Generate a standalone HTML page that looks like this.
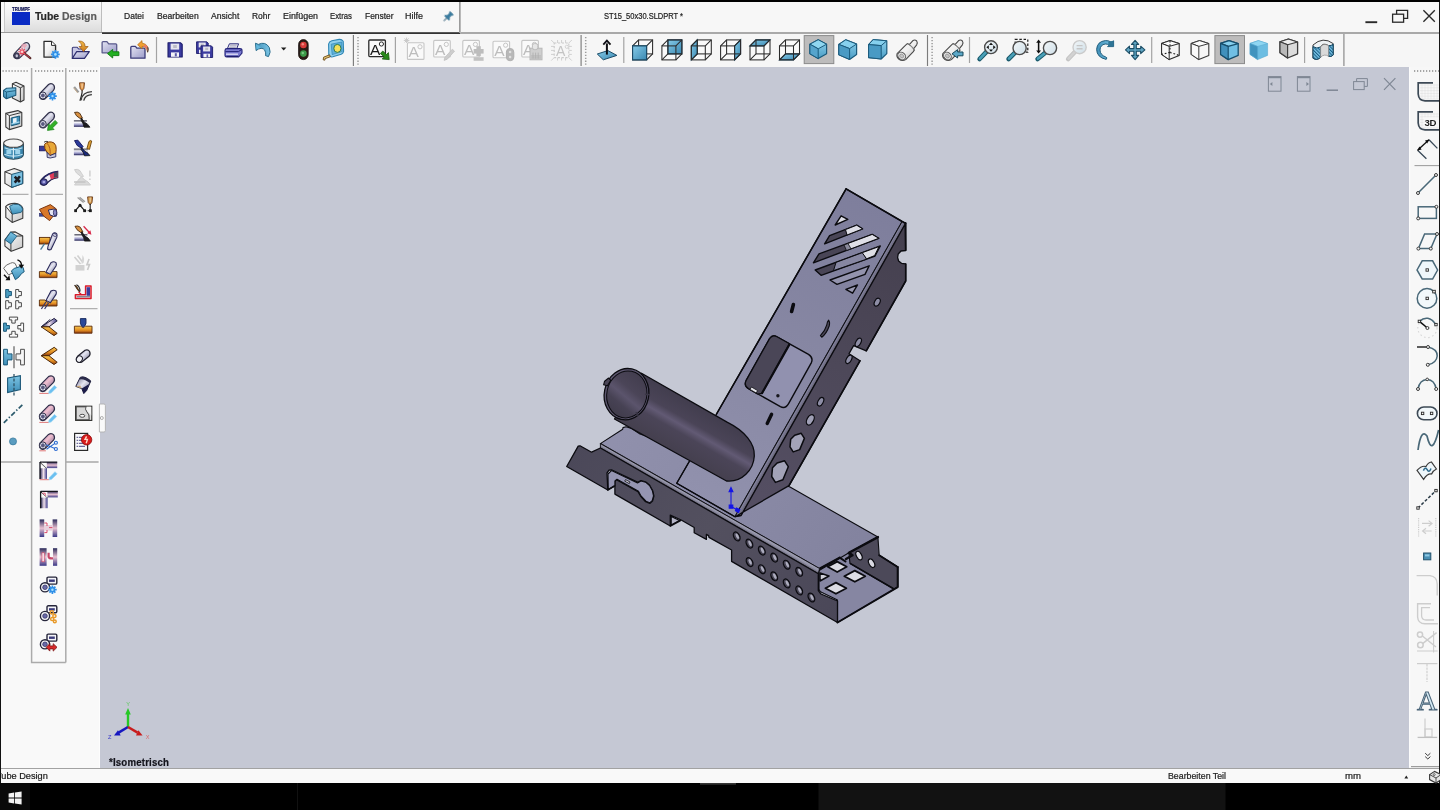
<!DOCTYPE html>
<html lang="de">
<head>
<meta charset="utf-8">
<title>Tube Design - ST15_50x30.SLDPRT *</title>
<style>
*{box-sizing:border-box;margin:0;padding:0}
html,body{width:1440px;height:810px;overflow:hidden;background:#f6f6f6;font-family:"Liberation Sans","DejaVu Sans",sans-serif;}
#app{position:absolute;left:0;top:0;width:1440px;height:810px;overflow:hidden;background:#f6f6f6}
.abs{position:absolute}
#topblack{left:0;top:0;width:1440px;height:2px;background:#000}
#leftblack{left:0;top:2px;width:1px;height:782px;background:#111}
#titlebar{left:1px;top:2px;width:1439px;height:31px;background:#f7f7f7}
#logopanel{left:4px;top:2px;width:98px;height:30px;background:linear-gradient(#fbfbfb,#f1f1f1 45%,#dcdcdc);border-left:1px solid #c9c9c9;border-right:1px solid #bdbdbd}
#logosq{left:12px;top:12px;width:18px;height:13px;background:#0a2bc4}
#logotxt{left:12px;top:6px;font-size:5px;font-weight:bold;color:#0a1a7a;letter-spacing:0;line-height:5px;transform:scaleX(.92);transform-origin:0 0}
#apptitle{left:35px;top:9px;font-size:11.5px;font-weight:bold;color:#2a2a2a;line-height:14px;white-space:nowrap}
#apptitle span{color:#5c5c5c}
#menuline{left:102px;top:32px;width:358px;height:2px;background:linear-gradient(#6a6a6a,#222)}
#menuline2{left:460px;top:32.4px;width:980px;height:1.2px;background:#a9a9a9}
#menuline0{left:1px;top:32px;width:101px;height:1px;background:#9a9a9a}
#menuright{left:459px;top:2px;width:2px;height:31px;background:linear-gradient(90deg,#8c8c8c,#c8c8c8)}
.menu{top:11px;font-size:9.3px;color:#1e1e1e;line-height:12px;white-space:nowrap}
#doctitle{left:604px;top:11px;font-size:9px;color:#222;line-height:12px;white-space:nowrap}
#toolbar{left:1px;top:34px;width:1439px;height:33px;background:#f6f6f6}
#viewport{left:100px;top:67px;width:1309px;height:701px;background:#c5c8d4}
#leftbar{left:1px;top:67px;width:99px;height:702px;background:#f9f9f9;border-right:1px solid #fdfdfd}
#rightbar{left:1409px;top:67px;width:31px;height:702px;background:#f6f6f6}
#statusbar{left:0;top:768px;width:1440px;height:15px;background:#f9f9f9;border-top:1.4px solid #a2a2a2}
#taskbar{left:0;top:783px;width:1440px;height:27px;background:#000}
.st{top:771px;font-size:9.3px;color:#1a1a1a;line-height:12px;white-space:nowrap}
#isotxt{left:109px;top:756px;font-size:10px;font-weight:bold;color:#15151c;line-height:12px;letter-spacing:.3px;white-space:nowrap}
svg{position:absolute;left:0;top:0;overflow:visible}
.tx{position:absolute;white-space:nowrap;line-height:1.2;transform-origin:0 50%;filter:blur(.3px);-webkit-text-stroke:.22px currentColor}
</style>
</head>
<body>
<div id="app">
<div class="abs" id="titlebar"></div>
<div class="abs" id="toolbar"></div>
<div class="abs" id="leftbar"></div>
<div class="abs" id="rightbar"></div>
<div class="abs" id="viewport"></div>
<div class="abs" id="logopanel"></div>
<div class="abs" id="logosq"></div>
<div class="abs" id="menuline0"></div>
<div class="abs" id="menuline"></div>
<div class="abs" id="menuline2"></div>
<div class="abs" id="menuright"></div>
<div class="abs" id="statusbar"></div>
<div class="abs" id="taskbar"></div>
<div class="abs" id="topblack"></div>
<div class="abs" id="leftblack"></div>
<svg id="model" style="filter:blur(.35px)" width="1440" height="810" viewBox="0 0 1440 810">
<defs>
<linearGradient id="gTop" gradientUnits="userSpaceOnUse" x1="620" y1="430" x2="880" y2="580"><stop offset="0" stop-color="#9090ac"/><stop offset=".5" stop-color="#8989a5"/><stop offset="1" stop-color="#81819d"/></linearGradient>
<linearGradient id="gFront" gradientUnits="userSpaceOnUse" x1="880" y1="200" x2="700" y2="500"><stop offset="0" stop-color="#7e7e9c"/><stop offset=".5" stop-color="#8787a3"/><stop offset="1" stop-color="#9191ad"/></linearGradient>
<linearGradient id="gSide" gradientUnits="userSpaceOnUse" x1="570" y1="450" x2="840" y2="620"><stop offset="0" stop-color="#4b4859"/><stop offset=".5" stop-color="#53505f"/><stop offset="1" stop-color="#4a4758"/></linearGradient>
<linearGradient id="gUSide" gradientUnits="userSpaceOnUse" x1="900" y1="230" x2="770" y2="500"><stop offset="0" stop-color="#45404f"/><stop offset=".5" stop-color="#4d4859"/><stop offset="1" stop-color="#544e62"/></linearGradient>
<linearGradient id="gTube" gradientUnits="userSpaceOnUse" x1="700" y1="400" x2="672" y2="449"><stop offset="0" stop-color="#3f3b4b"/><stop offset=".42" stop-color="#4a4457"/><stop offset=".55" stop-color="#625a74"/><stop offset=".68" stop-color="#4b4558"/><stop offset="1" stop-color="#45404f"/></linearGradient>
<linearGradient id="gTubeIn" gradientUnits="userSpaceOnUse" x1="638" y1="371" x2="614" y2="417"><stop offset="0" stop-color="#413c4d"/><stop offset=".38" stop-color="#4b4558"/><stop offset=".55" stop-color="#5b546c"/><stop offset=".72" stop-color="#474254"/><stop offset="1" stop-color="#3e3a49"/></linearGradient>
<linearGradient id="gBev" gradientUnits="userSpaceOnUse" x1="0" y1="0" x2="3" y2="-5.2" spreadMethod="reflect"><stop offset="0" stop-color="#5a5768"/><stop offset="1" stop-color="#a9a9bd"/></linearGradient>
<linearGradient id="gBevB" gradientUnits="userSpaceOnUse" x1="700" y1="505.4" x2="703.4" y2="499.5"><stop offset="0" stop-color="#5f5c6d"/><stop offset=".35" stop-color="#9292a6"/><stop offset="1" stop-color="#adadc0"/></linearGradient>
<linearGradient id="gBevU" gradientUnits="userSpaceOnUse" x1="820" y1="367" x2="824.6" y2="369.6"><stop offset="0" stop-color="#8686a3"/><stop offset=".5" stop-color="#6f6d82"/><stop offset="1" stop-color="#4b4757"/></linearGradient>
</defs>
<polygon points="600.4,443.6 622.7,429.2 623.0,427.6 626.0,426.8 631.6,428.6 640.0,434.0 790.0,487.0 877.9,537.1 848.9,552.7 852.0,555.5 845.0,559.5 839.7,557.7 819.5,568.7" fill="url(#gTop)" stroke="#0b0b10" stroke-width="1.1" stroke-linejoin="round" />
<polygon points="818.3,571.0 848.9,552.7 879.2,555.5 897.7,567.0 897.7,587.1 837.5,622.5 837.5,600.0 821.0,592.0 818.3,589.0" fill="#8686a2" stroke="#0b0b10" stroke-width="1.1" stroke-linejoin="round" />
<polygon points="877.9,537.1 879.2,555.2 897.7,567.0 897.7,587.1 894.0,589.0 850.0,563.5 848.9,552.7" fill="#4c4959" stroke="#0b0b10" stroke-width="1.1" stroke-linejoin="round" />
<polyline points="894.0,589.0 850.6,563.6" fill="none" stroke="#0b0b10" stroke-width="1.6" stroke-linecap="round" stroke-linejoin="round" />
<polyline points="877.9,537.1 848.9,552.7 852.5,555.2 846.0,559.0" fill="none" stroke="#0b0b10" stroke-width="2.4" stroke-linecap="round" stroke-linejoin="round" />
<polyline points="839.7,557.7 845.5,561.5" fill="none" stroke="#0b0b10" stroke-width="2" stroke-linecap="round" stroke-linejoin="round" />
<polyline points="839.7,557.7 819.5,568.7" fill="none" stroke="#0b0b10" stroke-width="2.4" stroke-linecap="round" stroke-linejoin="round" />
<polyline points="818.5,570.0 818.5,590.0" fill="none" stroke="#0b0b10" stroke-width="2.2" stroke-linecap="round" stroke-linejoin="round" />
<ellipse cx="859.0" cy="555.6" rx="2.6" ry="4.6" transform="rotate(-28 859.0 555.6)" fill="#d9d9e2" stroke="#0b0b10" stroke-width="1.2" />
<ellipse cx="871.6" cy="563.2" rx="2.6" ry="4.6" transform="rotate(-28 871.6 563.2)" fill="#d9d9e2" stroke="#0b0b10" stroke-width="1.2" />
<polygon points="827.7,566.8 837.2,561.6 846.7,566.8 837.2,572.0" fill="#dcdce4" stroke="#0b0b10" stroke-width="1.8" stroke-linejoin="round" />
<polygon points="844.3,576.2 854.8,570.6 865.3,576.2 854.8,581.8" fill="#dcdce4" stroke="#0b0b10" stroke-width="1.8" stroke-linejoin="round" />
<polygon points="825.4,588.2 835.9,582.6 846.4,588.2 835.9,593.8" fill="#dcdce4" stroke="#0b0b10" stroke-width="1.8" stroke-linejoin="round" />
<polygon points="820.0,573.0 829.0,576.0 820.0,581.0" fill="#d0d0da" stroke="#0b0b10" stroke-width="1.5" stroke-linejoin="round" />
<polyline points="897.7,567.0 897.7,587.1 837.5,622.5" fill="none" stroke="#0b0b10" stroke-width="2" stroke-linecap="round" stroke-linejoin="round" />
<polyline points="879.2,555.2 897.7,567.0" fill="none" stroke="#0b0b10" stroke-width="1.8" stroke-linecap="round" stroke-linejoin="round" />
<polygon points="600.4,443.6 819.5,568.5 818.3,573.7 600.4,448.0" fill="url(#gBevB)" stroke="#0b0b10" stroke-width="0.9" stroke-linejoin="round" />
<polygon points="566.7,466.5 578.2,446.1 580.0,445.8 591.6,452.2 600.4,448.0 818.3,573.7 818.3,590.5 821.0,594.0 837.5,601.0 837.5,622.5 731.6,561.4 731.6,550.0 709.0,537.4 708.6,535.6 706.4,534.4 706.4,539.4 694.2,532.8 694.2,527.5 681.2,520.0 670.3,515.1 670.3,526.0 614.9,494.1 614.9,481.5 616.5,479.6 638.0,491.6 640.5,496.0 645.6,501.7 649.8,503.4 652.5,501.0 653.9,496.0 652.6,490.5 649.5,485.0 645.5,481.8 641.0,480.6 638.0,482.4 612.0,470.0 609.0,470.2 607.0,473.0 607.8,490.0" fill="url(#gSide)" stroke="#0b0b10" stroke-width="1.3" stroke-linejoin="round" />
<polygon points="608.0,474.0 611.5,470.6 637.5,483.0 641.0,481.0 645.5,482.2 649.5,485.5 652.4,490.8 653.5,496.0 652.2,500.6 649.6,502.8 646.0,501.2 641.0,496.0 638.5,491.3 617.0,479.3 614.9,481.0 614.9,486.0 608.3,489.5" fill="#9595b2" stroke="#0b0b10" stroke-width="1.1" stroke-linejoin="round" />
<polygon points="625.5,479.6 630.0,482.0 629.3,483.6 624.8,481.2" fill="#dcdce6" stroke="#0b0b10" stroke-width="0.8" stroke-linejoin="round" />
<polygon points="671.2,516.5 679.5,520.5 671.2,525.0" fill="#b4b4c6" stroke="#0b0b10" stroke-width="1.2" stroke-linejoin="round" />
<polyline points="607.8,490.0 614.3,486.0" fill="none" stroke="#0b0b10" stroke-width="1.5" stroke-linecap="round" stroke-linejoin="round" />
<polyline points="670.3,526.0 680.5,520.5" fill="none" stroke="#0b0b10" stroke-width="1.5" stroke-linecap="round" stroke-linejoin="round" />
<ellipse cx="736.7" cy="536.4" rx="2.9" ry="4.7" transform="rotate(-27 736.7 536.4)" fill="#4a4757" stroke="#0b0b10" stroke-width="1.3" />
<ellipse cx="737.3" cy="536.2" rx="1.3" ry="3.0" transform="rotate(-27 737.3 536.2)" fill="#adadbe"/>
<ellipse cx="749.4" cy="543.6" rx="2.9" ry="4.7" transform="rotate(-27 749.4 543.6)" fill="#4a4757" stroke="#0b0b10" stroke-width="1.3" />
<ellipse cx="750.0" cy="543.4" rx="1.3" ry="3.0" transform="rotate(-27 750.0 543.4)" fill="#adadbe"/>
<ellipse cx="761.8" cy="550.6" rx="2.9" ry="4.7" transform="rotate(-27 761.8 550.6)" fill="#4a4757" stroke="#0b0b10" stroke-width="1.3" />
<ellipse cx="762.4" cy="550.4" rx="1.3" ry="3.0" transform="rotate(-27 762.4 550.4)" fill="#adadbe"/>
<ellipse cx="774.2" cy="557.6" rx="2.9" ry="4.7" transform="rotate(-27 774.2 557.6)" fill="#4a4757" stroke="#0b0b10" stroke-width="1.3" />
<ellipse cx="774.8" cy="557.4" rx="1.3" ry="3.0" transform="rotate(-27 774.8 557.4)" fill="#adadbe"/>
<ellipse cx="786.7" cy="564.7" rx="2.9" ry="4.7" transform="rotate(-27 786.7 564.7)" fill="#4a4757" stroke="#0b0b10" stroke-width="1.3" />
<ellipse cx="787.3" cy="564.5" rx="1.3" ry="3.0" transform="rotate(-27 787.3 564.5)" fill="#adadbe"/>
<ellipse cx="799.2" cy="571.8" rx="2.9" ry="4.7" transform="rotate(-27 799.2 571.8)" fill="#4a4757" stroke="#0b0b10" stroke-width="1.3" />
<ellipse cx="799.8" cy="571.6" rx="1.3" ry="3.0" transform="rotate(-27 799.8 571.6)" fill="#adadbe"/>
<ellipse cx="749.6" cy="562.1" rx="2.9" ry="4.7" transform="rotate(-27 749.6 562.1)" fill="#4a4757" stroke="#0b0b10" stroke-width="1.3" />
<ellipse cx="750.2" cy="561.9" rx="1.3" ry="3.0" transform="rotate(-27 750.2 561.9)" fill="#adadbe"/>
<ellipse cx="761.9" cy="569.2" rx="2.9" ry="4.7" transform="rotate(-27 761.9 569.2)" fill="#4a4757" stroke="#0b0b10" stroke-width="1.3" />
<ellipse cx="762.5" cy="569.0" rx="1.3" ry="3.0" transform="rotate(-27 762.5 569.0)" fill="#adadbe"/>
<ellipse cx="774.2" cy="576.3" rx="2.9" ry="4.7" transform="rotate(-27 774.2 576.3)" fill="#4a4757" stroke="#0b0b10" stroke-width="1.3" />
<ellipse cx="774.8" cy="576.1" rx="1.3" ry="3.0" transform="rotate(-27 774.8 576.1)" fill="#adadbe"/>
<ellipse cx="786.7" cy="583.4" rx="2.9" ry="4.7" transform="rotate(-27 786.7 583.4)" fill="#4a4757" stroke="#0b0b10" stroke-width="1.3" />
<ellipse cx="787.3" cy="583.2" rx="1.3" ry="3.0" transform="rotate(-27 787.3 583.2)" fill="#adadbe"/>
<ellipse cx="799.2" cy="590.4" rx="2.9" ry="4.7" transform="rotate(-27 799.2 590.4)" fill="#4a4757" stroke="#0b0b10" stroke-width="1.3" />
<ellipse cx="799.8" cy="590.2" rx="1.3" ry="3.0" transform="rotate(-27 799.8 590.2)" fill="#adadbe"/>
<ellipse cx="811.4" cy="597.5" rx="2.9" ry="4.7" transform="rotate(-27 811.4 597.5)" fill="#4a4757" stroke="#0b0b10" stroke-width="1.3" />
<ellipse cx="812.0" cy="597.3" rx="1.3" ry="3.0" transform="rotate(-27 812.0 597.3)" fill="#adadbe"/>
<polygon points="846.1,188.9 902.2,221.5 735.0,516.7 676.7,483.3" fill="url(#gFront)" stroke="#0b0b10" stroke-width="1.3" stroke-linejoin="round" />
<polygon points="902.2,221.5 905.8,223.0 741.1,515.5 735.0,516.7" fill="url(#gBevU)" stroke="#0b0b10" stroke-width="0.9" stroke-linejoin="round" />
<polygon points="905.8,223.0 905.2,223.0 905.7,250.5 901.0,251.0 898.2,254.0 897.6,257.5 898.6,261.0 901.5,263.3 905.7,263.8 905.7,281.0 866.3,350.8 853.6,345.6 849.0,353.8 860.0,360.8 789.0,485.6 735.5,516.5 741.1,515.5" fill="url(#gUSide)" stroke="#0b0b10" stroke-width="1.3" stroke-linejoin="round" />
<polyline points="905.7,223.5 905.7,250.0" fill="none" stroke="#0b0b10" stroke-width="1.8" stroke-linecap="round" stroke-linejoin="round" />
<polyline points="905.7,264.0 905.7,281.0 866.3,350.8" fill="none" stroke="#0b0b10" stroke-width="1.6" stroke-linecap="round" stroke-linejoin="round" />
<polyline points="860.0,360.8 789.0,485.6" fill="none" stroke="#0b0b10" stroke-width="1.6" stroke-linecap="round" stroke-linejoin="round" />
<polyline points="846.1,188.9 902.2,221.5 905.4,223.2" fill="none" stroke="#0b0b10" stroke-width="1.6" stroke-linecap="round" stroke-linejoin="round" />
<polyline points="846.1,188.9 716.5,414.0" fill="none" stroke="#0b0b10" stroke-width="1.5" stroke-linecap="round" stroke-linejoin="round" />
<polyline points="689.2,461.7 676.7,483.3 735.0,516.7" fill="none" stroke="#0b0b10" stroke-width="1.2" stroke-linecap="round" stroke-linejoin="round" />
<ellipse cx="877.2" cy="302.2" rx="2.6" ry="4.2" transform="rotate(28 877.2 302.2)" fill="#8e8ea6" stroke="#0b0b10" stroke-width="1.2" />
<ellipse cx="858.3" cy="342.4" rx="2.5" ry="4.6" transform="rotate(28 858.3 342.4)" fill="#8e8ea6" stroke="#0b0b10" stroke-width="1.2" />
<ellipse cx="848.9" cy="359.4" rx="2.5" ry="4.6" transform="rotate(28 848.9 359.4)" fill="#8e8ea6" stroke="#0b0b10" stroke-width="1.2" />
<ellipse cx="820.6" cy="401.7" rx="2.6" ry="4.6" transform="rotate(28 820.6 401.7)" fill="#8e8ea6" stroke="#0b0b10" stroke-width="1.2" />
<ellipse cx="810.3" cy="419.8" rx="3.3" ry="5.6" transform="rotate(28 810.3 419.8)" fill="#a0a0b6" stroke="#0b0b10" stroke-width="1.3" />
<polygon points="801.2,433.3 804.4,438.4 799.7,449.6 793.2,451.9 790.0,446.8 790.7,439.3 794.7,435.2" fill="#a3a3b8" stroke="#0b0b10" stroke-width="1.5" stroke-linejoin="round" />
<polygon points="784.6,460.8 788.3,466.7 782.9,479.7 775.4,482.4 771.7,476.5 772.5,467.8 777.1,463.0" fill="#a3a3b8" stroke="#0b0b10" stroke-width="1.5" stroke-linejoin="round" />
<polygon points="841.1,215.8 847.8,219.4 835.2,225.0" fill="#dedee6" stroke="#0b0b10" stroke-width="1.4" stroke-linejoin="round" />
<polygon points="829.6,235.6 856.7,225.2 862.6,228.9 824.6,243.9" fill="#494556" stroke="#0b0b10" stroke-width="1.4" stroke-linejoin="round" />
<polygon points="845.5,229.6 856.7,225.2 862.6,228.9 847.0,235.0" fill="#dedee6" stroke="#0b0b10" stroke-width="1" stroke-linejoin="round" />
<polygon points="819.0,253.9 872.2,234.4 878.8,238.3 813.4,262.8" fill="#494556" stroke="#0b0b10" stroke-width="1.4" stroke-linejoin="round" />
<polygon points="846.0,244.2 872.2,234.4 878.8,238.3 850.5,249.0" fill="#dedee6" stroke="#0b0b10" stroke-width="1" stroke-linejoin="round" />
<polygon points="844.0,245.0 848.0,243.5 851.0,248.8 846.5,250.5" fill="#8a8a9c" stroke="#0b0b10" stroke-width="0.8" stroke-linejoin="round" />
<polygon points="815.2,270.0 880.3,246.0 875.0,256.0 821.1,275.3" fill="#494556" stroke="#0b0b10" stroke-width="1.4" stroke-linejoin="round" />
<polygon points="836.0,262.4 863.0,252.4 866.5,259.2 833.5,270.6" fill="#8787a2" stroke="#0b0b10" stroke-width="1" stroke-linejoin="round" />
<polygon points="862.2,252.7 879.0,246.6 874.6,255.6 866.6,258.8" fill="#dedee6" stroke="#0b0b10" stroke-width="1" stroke-linejoin="round" />
<polygon points="830.0,280.0 869.2,265.8 865.0,274.4 837.0,284.4" fill="#9393ad" stroke="#0b0b10" stroke-width="1.4" stroke-linejoin="round" />
<polygon points="857.5,285.0 852.6,293.2 845.9,289.3" fill="#9a9ab2" stroke="#0b0b10" stroke-width="1.4" stroke-linejoin="round" />
<polyline points="793.4,304.5 791.6,311.5" fill="none" stroke="#0b0b10" stroke-width="3.6" stroke-linecap="round" stroke-linejoin="round" />
<path d="M828.6,320.2 Q830.2,322 829.2,326 Q826.6,333.5 821.8,337.2 L820.4,335.6 Q825,331 826.8,324.8 Q827.2,321.6 828.6,320.2Z" fill="#4a4656" stroke="#0b0b10" stroke-width="1.1" stroke-linejoin="round" />
<path d="M776.5,336.6 L808.5,354.4 Q813.5,357.6 811.4,362.6 L788.6,403.6 Q785.4,409.2 780.4,406.6 L748.4,388.6 Q743.6,385.6 746.2,380.4 L769.6,338.6 Q772.6,334.2 776.5,336.6Z" fill="#9191af" stroke="#0b0b10" stroke-width="1.4" stroke-linejoin="round" />
<path d="M776.5,336.6 L789.5,343.8 L762,393.4 L757.5,394 L748.4,388.6 Q743.6,385.6 746.2,380.4 L769.6,338.6 Q772.6,334.2 776.5,336.6Z" fill="#4a4657" stroke="#0b0b10" stroke-width="1.2" stroke-linejoin="round" />
<polyline points="789.3,344.6 762.0,393.2" fill="none" stroke="#0b0b10" stroke-width="2.2" stroke-linecap="round" stroke-linejoin="round" />
<polygon points="751.5,387.0 757.6,390.6 756.2,393.0 750.0,389.4" fill="#e4e4ea" stroke="#0b0b10" stroke-width="0.8" stroke-linejoin="round" />
<circle cx="777.9" cy="395.8" r="1.7" fill="#16161c"/>
<polyline points="771.6,414.2 767.2,423.4" fill="none" stroke="#0b0b10" stroke-width="3.4" stroke-linecap="round" stroke-linejoin="round" />
<path d="M641.5,373.2 L727.5,422.4 C745.0,431.0 755.0,444.0 754.3,456.0 C753.5,470.0 742.0,482.5 726.5,481.0 L614.5,419.0 Z" fill="url(#gTube)" stroke="#0b0b10" stroke-width="1.3" stroke-linejoin="round" />
<ellipse cx="626.5" cy="394.2" rx="22.2" ry="25.8" transform="rotate(12 626.5 394.2)" fill="#5d5770" stroke="#0b0b10" stroke-width="1.3" />
<ellipse cx="626.8" cy="394.4" rx="20.0" ry="23.6" transform="rotate(12 626.8 394.4)" fill="url(#gTubeIn)" stroke="#0b0b10" stroke-width="1.0" />
<polygon points="604.6,381.2 608.6,378.0 610.8,380.4 607.4,385.8 603.6,384.8" fill="#4a4557" stroke="#0b0b10" stroke-width="1.1" stroke-linejoin="round" />
<polyline points="645.6,394.2 649.4,394.8" fill="none" stroke="#3a3646" stroke-width="1.6" stroke-linecap="round" stroke-linejoin="round" />
<polyline points="636.2,412.6 638.0,415.4" fill="none" stroke="#3a3646" stroke-width="1.6" stroke-linecap="round" stroke-linejoin="round" />
<g stroke="#1414e6" stroke-width="1.1" fill="#1414e6"><line x1="731" y1="506.5" x2="731" y2="491"/><polygon points="731,487.6 729.1,491.6 732.9,491.6"/><line x1="731" y1="506.5" x2="738.5" y2="510.6"/><polygon points="729.2,505 732.8,505 732.8,508.2 729.2,508.2"/><polygon points="736.4,508 739.8,509.6 738.6,512.4 735.4,510.8"/></g>
</svg>
<svg id="tb" width="1440" height="810" viewBox="0 0 1440 810">
<defs>
<linearGradient id="bl" x1="0" y1="0" x2="1" y2="1"><stop offset="0" stop-color="#86cbe8"/><stop offset="1" stop-color="#3a88b2"/></linearGradient>
<linearGradient id="bl2" x1="0" y1="0" x2="0" y2="1"><stop offset="0" stop-color="#8fd3ee"/><stop offset="1" stop-color="#4a9cc4"/></linearGradient>
<linearGradient id="bl3" x1="0" y1="0" x2="1" y2="0"><stop offset="0" stop-color="#3f8fb8"/><stop offset="1" stop-color="#7cc6e6"/></linearGradient>
<linearGradient id="fold" x1="0" y1="0" x2="1" y2="1"><stop offset="0" stop-color="#e4e4f2"/><stop offset="1" stop-color="#9a9ac8"/></linearGradient>
<linearGradient id="gry" x1="0" y1="0" x2="1" y2="1"><stop offset="0" stop-color="#ffffff"/><stop offset=".5" stop-color="#f0f0f0"/><stop offset="1" stop-color="#bcbcbc"/></linearGradient>
<linearGradient id="tubeg" x1="0" y1="0" x2="1" y2="1"><stop offset="0" stop-color="#9d9db5"/><stop offset=".4" stop-color="#f0eef6"/><stop offset="1" stop-color="#7a7a98"/></linearGradient>
<linearGradient id="lens" x1="0" y1="0" x2="1" y2="1"><stop offset="0" stop-color="#f2f6f8"/><stop offset="1" stop-color="#cfdfe8"/></linearGradient>
<linearGradient id="orng" x1="0" y1="0" x2="0" y2="1"><stop offset="0" stop-color="#f6c04a"/><stop offset="1" stop-color="#c9781c"/></linearGradient>
<filter id="soft" x="-5%" y="-5%" width="110%" height="110%"><feGaussianBlur stdDeviation="0.45"/></filter>
<filter id="soft2" x="-5%" y="-5%" width="110%" height="110%"><feGaussianBlur stdDeviation="0.3"/></filter>
</defs>
<g filter="url(#soft)">
<line x1="156.5" y1="37" x2="156.5" y2="63" stroke="#a3a3a3" stroke-width="1.2"/>
<line x1="395.4" y1="37" x2="395.4" y2="63" stroke="#a3a3a3" stroke-width="1.2"/>
<line x1="623.8" y1="37" x2="623.8" y2="63" stroke="#a3a3a3" stroke-width="1.2"/>
<line x1="969.5" y1="37" x2="969.5" y2="63" stroke="#a3a3a3" stroke-width="1.2"/>
<line x1="1151.7" y1="37" x2="1151.7" y2="63" stroke="#a3a3a3" stroke-width="1.2"/>
<line x1="1304.6" y1="37" x2="1304.6" y2="63" stroke="#a3a3a3" stroke-width="1.2"/>
<line x1="353.4" y1="35" x2="353.4" y2="66" stroke="#7c7c7c" stroke-width="1.15"/>
<line x1="358.0" y1="37" x2="358.0" y2="65" stroke="#9c9c9c" stroke-width="1.5" stroke-dasharray="1.3 1.65"/>
<line x1="581.1" y1="35" x2="581.1" y2="66" stroke="#7c7c7c" stroke-width="1.15"/>
<line x1="585.7" y1="37" x2="585.7" y2="65" stroke="#9c9c9c" stroke-width="1.5" stroke-dasharray="1.3 1.65"/>
<line x1="927.5" y1="35" x2="927.5" y2="66" stroke="#7c7c7c" stroke-width="1.15"/>
<line x1="932.1" y1="37" x2="932.1" y2="65" stroke="#9c9c9c" stroke-width="1.5" stroke-dasharray="1.3 1.65"/>
<line x1="1343.9" y1="34" x2="1343.9" y2="66" stroke="#9a9a9a" stroke-width="1.4"/>
<rect x="804.2" y="35.6" width="29.6" height="28" fill="#bdbcbc" stroke="#8b8b8b" stroke-width="1"/>
<rect x="1214.9" y="35.6" width="29.6" height="28" fill="#bdbcbc" stroke="#8b8b8b" stroke-width="1"/>
<g transform="translate(12.8 40.2)" ><g transform="scale(1.0)"><path d="M1.5,13.5 L11,3.5 Q14.5,1 16.5,4.5 Q17.5,7.5 15.5,9.5 L6.5,18 Q3,19.5 1.2,17 Q0.2,15 1.5,13.5Z" fill="url(#tubeg)" stroke="#3a3a52" stroke-width="1.2"/><ellipse cx="4" cy="15.5" rx="2.6" ry="3" fill="#4a4a66" stroke="#2a2a40" stroke-width=".8"/><ellipse cx="4" cy="15.5" rx="1.2" ry="1.5" fill="#c8c8d8"/><path d="M9,3.8 Q12.5,2.2 14.5,5 L12,8 Q10,6.5 8,7.5Z" fill="#e6a0b0" opacity=".8"/></g><path d="M9.5,11.5 L17.5,18" stroke="#5a2a2a" stroke-width="2.2" stroke-linecap="round"/><path d="M9.5,11.5 L16.8,17.4" stroke="#c04050" stroke-width="1"/><g stroke="#e84a5a" stroke-width="1.1"><path d="M9.3,7.5v8M5.5,11.5h8M6.6,8.8l5.5,5.5M12,8.8l-5.4,5.5"/></g><circle cx="9.3" cy="11.5" r="1.3" fill="#ffd0d0"/></g>
<g transform="translate(43.0 40.6)" ><path d="M1,0.8 H8.5 L12.6,4.8 V16.6 H1Z" fill="url(#gry)" stroke="#2c2c2c" stroke-width="1.3" stroke-linejoin="round"/><path d="M8.5,0.8 V4.8 H12.6" fill="#fff" stroke="#2c2c2c" stroke-width="1"/><g transform="translate(12.4 13.8) scale(.84)"><g transform="translate(0 0)"><circle r="3.6" fill="#2f8fe8"/><g stroke="#2f8fe8" stroke-width="2"><path d="M0,-5.2V5.2M-5.2,0H5.2M-3.7,-3.7L3.7,3.7M3.7,-3.7L-3.7,3.7"/></g><circle r="1.6" fill="#a8e0ff"/></g></g></g>
<g transform="translate(71.5 40.0)" ><path d="M0.8,18.2 V8.2 Q0.8,7.2 1.8,7.2 H5.6 L7.2,9 H12.6 V11" fill="#c9c9e6" stroke="#3c3c7a" stroke-width="1.1"/><path d="M0.8,18.4 L5.2,11.6 H17.8 L13,18.4Z" fill="url(#fold)" stroke="#2e2e6e" stroke-width="1.2" stroke-linejoin="round"/><path d="M7,1 Q13.5,0.8 13.6,6.5 L16.6,6.5 L12,11.6 L7.6,6.5 L10.4,6.5 Q10.2,3.4 7,1Z" fill="url(#orng)" stroke="#9a5510" stroke-width=".7"/></g>
<g transform="translate(101.3 40.8)" ><path d="M0.8,12 V1.8 Q0.8,0.8 1.8,0.8 H5.6 L7.4,3 H14.4 Q15.4,3 15.4,4 V12Z" fill="url(#fold)" stroke="#5a5a8c" stroke-width="1.3" stroke-linejoin="round"/><path d="M17.6,11 H11.4 V8.6 L6.2,12.8 L11.4,17.2 V14.8 H17.6Z" fill="#22b020" stroke="#0c7a0c" stroke-width=".9" stroke-linejoin="round"/></g>
<g transform="translate(130.0 40.2)" ><path d="M0.8,18 V7.2 Q0.8,6.2 1.8,6.2 H5.4 L7,8 H14 Q15,8 15,9 V18Z" fill="url(#fold)" stroke="#3c3c7a" stroke-width="1.3" stroke-linejoin="round"/><path d="M12,0.4 L7.6,4.6 L12,8.6 V6.2 Q16.6,6 17.6,12 Q19.8,4.4 12,2.8Z" fill="#f0a030" stroke="#b06a10" stroke-width=".7"/><path d="M13,6.2 Q16.6,6.4 17.6,12 Q19,7 15.4,4.2Z" fill="#e87868"/><path d="M17.6,12 Q18.6,9 17.8,7" stroke="#333" stroke-width="1" fill="none"/></g>
<g transform="translate(167.2 42.0)" ><path d="M0.8,0.8 H13.4 L15,2.4 V15 H0.8Z" fill="#3a3aa0" stroke="#1c1c6a" stroke-width="1.1" stroke-linejoin="round"/><rect x="3.4" y="1.6" width="8.6" height="6" fill="#e6e6ee"/><rect x="6" y="3" width="3.6" height="3" fill="#bcbcc8"/><rect x="3.8" y="10.4" width="8" height="4.4" fill="#f4f4f8"/><rect x="7.6" y="11.2" width="2" height="3.2" fill="#5a5aa8"/></g>
<g transform="translate(195.9 41.2)" ><g transform="scale(.82)"><path d="M0.8,0.8 H13.4 L15,2.4 V15 H0.8Z" fill="#3a3aa0" stroke="#1c1c6a" stroke-width="1.1" stroke-linejoin="round"/><rect x="3.4" y="1.6" width="8.6" height="6" fill="#e6e6ee"/><rect x="6" y="3" width="3.6" height="3" fill="#bcbcc8"/><rect x="3.8" y="10.4" width="8" height="4.4" fill="#f4f4f8"/><rect x="7.6" y="11.2" width="2" height="3.2" fill="#5a5aa8"/></g><g transform="translate(4.4 4) scale(.82)"><path d="M0.8,0.8 H13.4 L15,2.4 V15 H0.8Z" fill="#3a3aa0" stroke="#1c1c6a" stroke-width="1.1" stroke-linejoin="round"/><rect x="3.4" y="1.6" width="8.6" height="6" fill="#e6e6ee"/><rect x="6" y="3" width="3.6" height="3" fill="#bcbcc8"/><rect x="3.8" y="10.4" width="8" height="4.4" fill="#f4f4f8"/><rect x="7.6" y="11.2" width="2" height="3.2" fill="#5a5aa8"/></g><g transform="translate(1.4 1) scale(.9)" opacity=".0"></g></g>
<g transform="translate(224.0 43.0)" ><path d="M5.4,0.8 H14.6 L12.8,5.6 H3.4Z" fill="#e8e8f0" stroke="#2e2e7a" stroke-width="1"/><path d="M6,2.8H12.6M5.2,4.4H11.8" stroke="#9a9ab0" stroke-width=".8"/><path d="M1,7.4 Q1,5.6 3,5.6 H15.8 Q18,5.6 18,7.4 V10 L14.6,14 H2.6 Q1,14 1,12.4Z" fill="#7a7ad0" stroke="#24247a" stroke-width="1.1"/><path d="M1.4,8.6 H14.4 L17.6,6.6" fill="none" stroke="#24247a" stroke-width="1"/><path d="M2,11.2 H14" stroke="#dcdcf4" stroke-width="1.4"/><path d="M2.4,13.4H14.4" stroke="#1e1e6a" stroke-width="1.2"/></g>
<g transform="translate(254.9 42.6)" ><path d="M0.6,0.6 L1.2,8 L3.6,6.4 Q9.4,4.2 10.6,9.6 Q11,11.6 10.6,13 L13.6,14 Q16.4,9.6 14.4,5 Q10.6,-1.6 3.4,1.8Z" fill="url(#bl3)" stroke="#2a6d8c" stroke-width="1" stroke-linejoin="round"/><path d="M1,1.4 L1.6,7 L6,5 Q4,3 1,1.4Z" fill="#63b7dc"/></g>
<polygon points="281,47.4 286.4,47.4 283.7,50.6" fill="#1e1e1e"/>
<g transform="translate(298.2 39.2)" ><rect x="0.4" y="0.4" width="9.6" height="20" rx="4.8" fill="#2a1c14" stroke="#1a120c" stroke-width=".8"/><circle cx="5.2" cy="5.8" r="3.3" fill="#d83a3a"/><circle cx="4.6" cy="5" r="1.2" fill="#f08a80"/><circle cx="5.2" cy="14.4" r="3.3" fill="#3c9a48"/><circle cx="4.6" cy="13.8" r="1.2" fill="#7cc884"/></g>
<g transform="translate(322.2 38.8)" ><path d="M6.4,5.2 Q7,2.6 9.6,2 L17,0.6 Q19.6,0.4 21,2.4 L21.4,12.6 Q21,14.6 19,15.4 L10.6,18 Q8,18.6 6.6,16.6Z" fill="#8fd0ee" stroke="#2f86b4" stroke-width="1.1"/><path d="M9,5.4 L19.6,3.2 L20,12.8 L10,15.8Z" fill="#5fb0da" stroke="#2f86b4" stroke-width=".7"/><ellipse cx="15.2" cy="9.6" rx="3.6" ry="4" fill="#f4e05a" stroke="#2c7a50" stroke-width="1"/><path d="M7.4,16 L1.4,18.4 L1,21 L2.6,21.4 L3,19.8 L8,18Z" fill="#e8c870" stroke="#6a4a1a" stroke-width=".9"/></g>
<g transform="translate(368.0 39.2)" ><g opacity="1"><rect x="0.8" y="0.8" width="16.6" height="16.6" rx="1" fill="#fafafa" stroke="#2a2a2a" stroke-width="1.3"/><text x="7.2" y="15.4" font-family="Liberation Sans,sans-serif" font-size="15.5" text-anchor="middle" fill="#1a1a1a">A</text><circle cx="13.4" cy="4.8" r="2.1" fill="none" stroke="#2a2a2a" stroke-width="1"/></g><path d="M12.4,14.2 L14.8,11.8 L18.4,15.4 L20.4,13.4 L21.2,20.4 L14.2,19.8 L16.2,17.8Z" fill="#2c8a1c" stroke="#1a5a10" stroke-width=".8" stroke-linejoin="round"/></g>
<g transform="translate(406.6 42.0)" ><g opacity="1"><rect x="0.8" y="0.8" width="16.6" height="16.6" rx="1" fill="#fafafa" stroke="#c6c6c6" stroke-width="1.1"/><text x="7.2" y="15.4" font-family="Liberation Sans,sans-serif" font-size="15.5" text-anchor="middle" fill="#bdbdbd">A</text><circle cx="13.4" cy="4.8" r="2.1" fill="none" stroke="#c6c6c6" stroke-width="1"/></g><g stroke="#c8c8c8" stroke-width="1"><path d="M0,-4.4V1M-2.8,-1.6H2.8M-2,-3.6L2,0.4M2,-3.6L-2,0.4"/></g></g>
<g transform="translate(432.9 39.6)" ><g opacity="1"><rect x="0.8" y="0.8" width="16.6" height="16.6" rx="1" fill="#fafafa" stroke="#c6c6c6" stroke-width="1.1"/><text x="7.2" y="15.4" font-family="Liberation Sans,sans-serif" font-size="15.5" text-anchor="middle" fill="#bdbdbd">A</text><circle cx="13.4" cy="4.8" r="2.1" fill="none" stroke="#c6c6c6" stroke-width="1"/></g><path d="M12,17.8 L19.4,9.6 L21.6,11.6 L14.4,19.6 L11.2,20.8Z" fill="#cdcdcd" stroke="#c0c0c0" stroke-width=".8"/></g>
<g transform="translate(462.0 39.6)" ><g opacity="1"><rect x="0.8" y="0.8" width="16.6" height="16.6" rx="1" fill="#fafafa" stroke="#c6c6c6" stroke-width="1.1"/><text x="7.2" y="15.4" font-family="Liberation Sans,sans-serif" font-size="15.5" text-anchor="middle" fill="#bdbdbd">A</text><circle cx="13.4" cy="4.8" r="2.1" fill="none" stroke="#c6c6c6" stroke-width="1"/></g><rect x="11.6" y="9.4" width="10" height="4.6" fill="#bdbdbd"/><rect x="14.4" y="6.6" width="4.4" height="10" fill="#bdbdbd"/><rect x="11.6" y="17.6" width="10" height="3.6" fill="#c2c2c2"/></g>
<g transform="translate(492.2 40.4)" ><g opacity="1"><rect x="0.8" y="0.8" width="16.6" height="16.6" rx="1" fill="#fafafa" stroke="#c6c6c6" stroke-width="1.1"/><text x="7.2" y="15.4" font-family="Liberation Sans,sans-serif" font-size="15.5" text-anchor="middle" fill="#bdbdbd">A</text><circle cx="13.4" cy="4.8" r="2.1" fill="none" stroke="#c6c6c6" stroke-width="1"/></g><rect x="14.2" y="8" width="7.4" height="12.4" rx="3.7" fill="#b8b8b8" stroke="#b0b0b0"/><circle cx="17.9" cy="11.6" r="1.3" fill="#e0e0e0"/><circle cx="17.9" cy="16.6" r="1.3" fill="#e0e0e0"/></g>
<g transform="translate(521.0 39.6)" ><g opacity="1"><rect x="0.8" y="0.8" width="16.6" height="16.6" rx="1" fill="#fafafa" stroke="#c6c6c6" stroke-width="1.1"/><text x="7.2" y="15.4" font-family="Liberation Sans,sans-serif" font-size="15.5" text-anchor="middle" fill="#bdbdbd">A</text><circle cx="13.4" cy="4.8" r="2.1" fill="none" stroke="#c6c6c6" stroke-width="1"/></g><rect x="9" y="8.6" width="12" height="11.6" fill="#cfcfcf" stroke="#b8b8b8" stroke-width="1"/><rect x="11.4" y="4" width="5.4" height="6" rx="2" fill="#e6e6e6" stroke="#bcbcbc"/><path d="M10,16.4H20M10,18.4H20M12,13v6M14.6,13v6M17.2,13v6" stroke="#b0b0b0" stroke-width=".9"/></g>
<g transform="translate(552.6 41.4)" ><rect x="1.6" y="1.6" width="14.6" height="14.6" fill="#f6f6f6" stroke="#cacaca" stroke-width="1.1" stroke-dasharray="2.2 1.6"/><g stroke="#d0d0d0" stroke-width="1"><path d="M-1.4,-1.4L1.6,1.6M19.2,-1.4L16.2,1.6M-1.4,19.2L1.6,16.2M19.2,19.2L16.2,16.2M-1.6,5h3M-1.6,9h3M-1.6,13h3M16.2,5h3M16.2,9h3M16.2,13h3M5,-1.4v3M9,-1.4v3M13,-1.4v3M5,16.2v3M9,16.2v3M13,16.2v3"/></g><text x="8" y="14.6" font-family="Liberation Sans,sans-serif" font-size="14" text-anchor="middle" fill="#c4c4c4">A</text><circle cx="14.2" cy="5.4" r="1.6" fill="none" stroke="#cfcfcf" stroke-width=".9"/></g>
<g transform="translate(596.7 40.0)" ><path d="M0.6,14 L11.2,10.6 L20.2,15.4 L6.6,19.8Z" fill="url(#bl)" stroke="#1a4a66" stroke-width="1" stroke-linejoin="round"/><path d="M10.2,14.6 V3.4" stroke="#101014" stroke-width="2"/><path d="M6.6,4.6 L10.2,0.6 L13.8,4.6" fill="none" stroke="#101014" stroke-width="1.8"/></g>
<g transform="translate(632.0 39.3)" ><rect x="0.6" y="0.6" width="20" height="20" fill="#fff" opacity=".35"/><g fill="none" stroke="#2b2b2b" stroke-width="1.05"><rect x="6.6" y="0.6" width="14" height="14"/><path d="M0.6,6.6L6.6,0.6M14.6,6.6L20.6,0.6M0.6,20.6L6.6,14.6M14.6,20.6L20.6,14.6"/><rect x="0.6" y="6.6" width="14" height="14"/></g><polygon points="0.6,6.6 14.6,6.6 14.6,20.6 0.6,20.6" fill="url(#bl)" stroke="#1a4a66" stroke-width="1.1"/></g>
<g transform="translate(661.3 39.3)" ><rect x="0.6" y="0.6" width="20" height="20" fill="#fff" opacity=".35"/><polygon points="6.6,0.6 20.6,0.6 20.6,14.6 6.6,14.6" fill="url(#bl)" stroke="#1a4a66" stroke-width="1.1"/><g fill="none" stroke="#2b2b2b" stroke-width="1.05"><rect x="6.6" y="0.6" width="14" height="14"/><path d="M0.6,6.6L6.6,0.6M14.6,6.6L20.6,0.6M0.6,20.6L6.6,14.6M14.6,20.6L20.6,14.6"/><rect x="0.6" y="6.6" width="14" height="14"/></g></g>
<g transform="translate(690.7 39.3)" ><rect x="0.6" y="0.6" width="20" height="20" fill="#fff" opacity=".35"/><polygon points="0.6,6.6 6.6,0.6 6.6,14.6 0.6,20.6" fill="url(#bl)" stroke="#1a4a66" stroke-width="1.1"/><g fill="none" stroke="#2b2b2b" stroke-width="1.05"><rect x="6.6" y="0.6" width="14" height="14"/><path d="M0.6,6.6L6.6,0.6M14.6,6.6L20.6,0.6M0.6,20.6L6.6,14.6M14.6,20.6L20.6,14.6"/><rect x="0.6" y="6.6" width="14" height="14"/></g></g>
<g transform="translate(720.0 39.3)" ><rect x="0.6" y="0.6" width="20" height="20" fill="#fff" opacity=".35"/><polygon points="14.6,6.6 20.6,0.6 20.6,14.6 14.6,20.6" fill="url(#bl)" stroke="#1a4a66" stroke-width="1.1"/><g fill="none" stroke="#2b2b2b" stroke-width="1.05"><rect x="6.6" y="0.6" width="14" height="14"/><path d="M0.6,6.6L6.6,0.6M14.6,6.6L20.6,0.6M0.6,20.6L6.6,14.6M14.6,20.6L20.6,14.6"/><rect x="0.6" y="6.6" width="14" height="14"/></g></g>
<g transform="translate(749.4 39.3)" ><rect x="0.6" y="0.6" width="20" height="20" fill="#fff" opacity=".35"/><polygon points="0.6,6.6 6.6,0.6 20.6,0.6 14.6,6.6" fill="url(#bl)" stroke="#1a4a66" stroke-width="1.1"/><g fill="none" stroke="#2b2b2b" stroke-width="1.05"><rect x="6.6" y="0.6" width="14" height="14"/><path d="M0.6,6.6L6.6,0.6M14.6,6.6L20.6,0.6M0.6,20.6L6.6,14.6M14.6,20.6L20.6,14.6"/><rect x="0.6" y="6.6" width="14" height="14"/></g></g>
<g transform="translate(778.9 39.3)" ><rect x="0.6" y="0.6" width="20" height="20" fill="#fff" opacity=".35"/><polygon points="0.6,20.6 6.6,14.6 20.6,14.6 14.6,20.6" fill="url(#bl)" stroke="#1a4a66" stroke-width="1.1"/><g fill="none" stroke="#2b2b2b" stroke-width="1.05"><rect x="6.6" y="0.6" width="14" height="14"/><path d="M0.6,6.6L6.6,0.6M14.6,6.6L20.6,0.6M0.6,20.6L6.6,14.6M14.6,20.6L20.6,14.6"/><rect x="0.6" y="6.6" width="14" height="14"/></g></g>
<g transform="translate(809.4 39.2)" ><polygon points="8.8,0.5 17.2,5 17.2,14.6 8.8,19.4 0.5,14.6 0.5,5" fill="url(#bl2)" stroke="#1a5a7c" stroke-width="1.2" stroke-linejoin="round"/><polygon points="8.8,0.5 17.2,5 8.8,9.6 0.5,5" fill="#8fd6f0" stroke="#1a5a7c" stroke-width="1"/><polygon points="0.5,5 8.8,9.6 8.8,19.4 0.5,14.6" fill="#56a4cc" stroke="#1a5a7c" stroke-width="1"/></g>
<g transform="translate(838.2 39.2)" ><polygon points="7.6,0.6 18.4,4.8 18.4,15.4 11.4,20.2 0.6,15.6 0.6,5.2" fill="url(#bl2)" stroke="#1a5a7c" stroke-width="1.2" stroke-linejoin="round"/><polygon points="7.6,0.6 18.4,4.8 11.4,9.4 0.6,5.2" fill="#86d0ee" stroke="#1a5a7c" stroke-width="1"/><polygon points="0.6,5.2 11.4,9.4 11.4,20.2 0.6,15.6" fill="#4a9ac4" stroke="#1a5a7c" stroke-width="1"/></g>
<g transform="translate(868.0 39.0)" ><polygon points="5.2,0.6 18.8,1.8 18.8,14.6 13.2,20 0.6,18.6 0.6,5.6" fill="url(#bl2)" stroke="#1a5a7c" stroke-width="1.2" stroke-linejoin="round"/><polygon points="5.2,0.6 18.8,1.8 13.2,6.6 0.6,5.6" fill="#86d0ee" stroke="#1a5a7c" stroke-width="1"/><polygon points="0.6,5.6 13.2,6.6 13.2,20 0.6,18.6" fill="#4a9ac4" stroke="#1a5a7c" stroke-width="1"/></g>
<g transform="translate(896.3 39.2)" ><path d="M0.8,14.4 L9.6,5.6 L11,4.4 L13,5.4 L16.4,1.6 Q18.6,0 20.4,1.8 Q21.6,3.6 20.4,5.6 L17.4,9.4 L18,11 L16.8,12.6 L9.4,20.4 Q6,22.4 2.6,20 Q-0.2,17.4 0.8,14.4Z" fill="url(#gry)" stroke="#4a4a4a" stroke-width="1.1" stroke-linejoin="round"/><path d="M11,4.4 Q15.4,6.6 18,11 M13,5.4 Q15.6,6.8 17.4,9.4" stroke="#7a7a7a" stroke-width=".9" fill="none"/><ellipse cx="5.4" cy="16.8" rx="4.2" ry="3.4" transform="rotate(40 5.4 16.8)" fill="#e6e6e6" stroke="#5a5a5a" stroke-width="1"/><ellipse cx="5.4" cy="16.8" rx="2.2" ry="1.7" transform="rotate(40 5.4 16.8)" fill="#c6c6c6" stroke="#8a8a8a" stroke-width=".7"/></g>
<g transform="translate(942.0 39.2)" ><path d="M0.8,14.4 L9.6,5.6 L11,4.4 L13,5.4 L16.4,1.6 Q18.6,0 20.4,1.8 Q21.6,3.6 20.4,5.6 L17.4,9.4 L18,11 L16.8,12.6 L9.4,20.4 Q6,22.4 2.6,20 Q-0.2,17.4 0.8,14.4Z" fill="url(#gry)" stroke="#4a4a4a" stroke-width="1.1" stroke-linejoin="round"/><path d="M11,4.4 Q15.4,6.6 18,11 M13,5.4 Q15.6,6.8 17.4,9.4" stroke="#7a7a7a" stroke-width=".9" fill="none"/><ellipse cx="5.4" cy="16.8" rx="4.2" ry="3.4" transform="rotate(40 5.4 16.8)" fill="#e6e6e6" stroke="#5a5a5a" stroke-width="1"/><ellipse cx="5.4" cy="16.8" rx="2.2" ry="1.7" transform="rotate(40 5.4 16.8)" fill="#c6c6c6" stroke="#8a8a8a" stroke-width=".7"/><path d="M21,12.8 H15.6 V10.4 L10,14.6 L15.6,18.8 V16.6 H21Z" fill="#5ba8c8" stroke="#1a4a5c" stroke-width="1" stroke-linejoin="round"/></g>
<g transform="translate(978.0 40.0)" ><path d="M8.4,11.8 L1.6,19.0" stroke="#1a5a6c" stroke-width="4.6" stroke-linecap="round"/><path d="M8.0,12.2 L2.0,18.6" stroke="#4aa0b8" stroke-width="2.6" stroke-linecap="round"/><circle cx="13" cy="7.2" r="6.4" fill="url(#lens)" stroke="#4c4c4c" stroke-width="1.4"/><g fill="#151515"><polygon points="13,2.6 15,5 11,5"/><polygon points="13,11.8 15,9.4 11,9.4"/><polygon points="8.4,7.2 10.8,5.2 10.8,9.2"/><polygon points="17.6,7.2 15.2,5.2 15.2,9.2"/></g></g>
<g transform="translate(1007.0 40.0)" ><rect x="8.2" y="-0.6" width="12.6" height="12.8" fill="none" stroke="#1a1a1a" stroke-width="1.2" stroke-dasharray="2.4 1.8"/><path d="M7.8,12.8 L1.6,19.0" stroke="#1a5a6c" stroke-width="4.6" stroke-linecap="round"/><path d="M7.4,13.2 L2.0,18.6" stroke="#4aa0b8" stroke-width="2.6" stroke-linecap="round"/><circle cx="12.6" cy="8" r="6.6" fill="url(#lens)" stroke="#4c4c4c" stroke-width="1.4"/></g>
<g transform="translate(1036.0 40.0)" ><path d="M9.2,12.8 L1.6,19.0" stroke="#1a5a6c" stroke-width="4.6" stroke-linecap="round"/><path d="M8.8,13.2 L2.0,18.6" stroke="#4aa0b8" stroke-width="2.6" stroke-linecap="round"/><circle cx="14" cy="8" r="6.6" fill="url(#lens)" stroke="#4c4c4c" stroke-width="1.4"/><path d="M2.6,2 V11.4" stroke="#111" stroke-width="1.5"/><polygon points="2.6,-0.4 5,2.8 0.2,2.8" fill="#111"/><polygon points="2.6,13.6 5,10.6 0.2,10.6" fill="#111"/></g>
<g transform="translate(1066.6 40.0)" ><path d="M8.2,12.0 L1.6,19.0" stroke="#c4c4c4" stroke-width="4.6" stroke-linecap="round"/><path d="M7.8,12.4 L2.0,18.6" stroke="#d2d2d2" stroke-width="2.6" stroke-linecap="round"/><circle cx="13" cy="7.2" r="6.6" fill="url(#lens)" stroke="#cbcbcb" stroke-width="1.4"/><path d="M10,5.6h6M10,8.8h6" stroke="#c6c6c6" stroke-width="1.4"/></g>
<g transform="translate(1095.8 40.0)" ><path d="M10.4,19.4 Q1,17.4 0.8,9.4 Q1.4,1.4 9.6,0.6 Q13.4,0.4 15.2,2.2 L17.8,0.8 V6.6 H11.8 L13.2,5.2 Q11.6,3.8 9.4,4 Q4.4,4.8 4.2,10 Q4.4,15 10,17 Q12,17.6 10.4,19.4Z" fill="url(#bl3)" stroke="#235e7c" stroke-width="1"/><path d="M12.4,1.6 L17.6,1 L17.6,6.4 L12.6,6.2Z" fill="#2f7596"/></g>
<g transform="translate(1125.3 40.0)" ><path d="M9.8,0.4 L13.4,4.4 H11 V8.6 H15.4 V6.2 L19.6,9.9 L15.4,13.6 V11.2 H11 V15.4 H13.4 L9.8,19.6 L6.2,15.4 H8.6 V11.2 H4.2 V13.6 L0.2,9.9 L4.2,6.2 V8.6 H8.6 V4.4 H6.2Z" fill="#5fa4c2" stroke="#1c4e66" stroke-width="1.1" stroke-linejoin="round"/></g>
<g transform="translate(1161.0 40.0)" ><polygon points="9,0.6 18.2,3.6 18.2,15.4 8.2,19.6 0.6,14.4 0.6,3.4" fill="#f4f4f4" stroke="#2a2a2a" stroke-width="1.1" stroke-linejoin="round"/><polygon points="9,0.6 18.2,3.6 8.2,6.4 0.6,3.4" fill="#fbfbfb" stroke="#2a2a2a" stroke-width="0.9900000000000001" stroke-linejoin="round"/><polygon points="0.6,3.4 8.2,6.4 8.2,19.6 0.6,14.4" fill="#f8f8f8" stroke="#2a2a2a" stroke-width="0.9900000000000001" stroke-linejoin="round"/><path d="M9,0.6V12.4M9,12.4L18.2,15.4M9,12.4L0.6,14.4" stroke="#222" stroke-width="1.1" stroke-dasharray="1.8 1.8" fill="none"/></g>
<g transform="translate(1190.6 40.0)" ><polygon points="9,0.6 18.2,3.6 18.2,15.4 8.2,19.6 0.6,14.4 0.6,3.4" fill="#f6f6f6" stroke="#3a3a3a" stroke-width="1.1" stroke-linejoin="round"/><polygon points="9,0.6 18.2,3.6 8.2,6.4 0.6,3.4" fill="#fdfdfd" stroke="#3a3a3a" stroke-width="0.9900000000000001" stroke-linejoin="round"/><polygon points="0.6,3.4 8.2,6.4 8.2,19.6 0.6,14.4" fill="#fafafa" stroke="#3a3a3a" stroke-width="0.9900000000000001" stroke-linejoin="round"/></g>
<g transform="translate(1220.0 40.0)" ><polygon points="9,0.6 18.2,3.6 18.2,15.4 8.2,19.6 0.6,14.4 0.6,3.4" fill="#6fbfe4" stroke="#174e6c" stroke-width="1.3" stroke-linejoin="round"/><polygon points="9,0.6 18.2,3.6 8.2,6.4 0.6,3.4" fill="#86cfee" stroke="#174e6c" stroke-width="1.1700000000000002" stroke-linejoin="round"/><polygon points="0.6,3.4 8.2,6.4 8.2,19.6 0.6,14.4" fill="#3f90bc" stroke="#174e6c" stroke-width="1.1700000000000002" stroke-linejoin="round"/></g>
<g transform="translate(1249.4 40.0)" ><polygon points="9,0.6 18.2,3.6 18.2,15.4 8.2,19.6 0.6,14.4 0.6,3.4" fill="#6cbde2" stroke="#5aaad0" stroke-width="0.6" stroke-linejoin="round"/><polygon points="9,0.6 18.2,3.6 8.2,6.4 0.6,3.4" fill="#8fd6f2" stroke="#5aaad0" stroke-width="0.54" stroke-linejoin="round"/><polygon points="0.6,3.4 8.2,6.4 8.2,19.6 0.6,14.4" fill="#4093be" stroke="#5aaad0" stroke-width="0.54" stroke-linejoin="round"/></g>
<g transform="translate(1279.4 38.4)" ><polygon points="9,0.6 18.2,3.6 18.2,15.4 8.2,19.6 0.6,14.4 0.6,3.4" fill="#dcdcdc" stroke="#3e3e3e" stroke-width="1.3" stroke-linejoin="round"/><polygon points="9,0.6 18.2,3.6 8.2,6.4 0.6,3.4" fill="#efefef" stroke="#3e3e3e" stroke-width="1.1700000000000002" stroke-linejoin="round"/><polygon points="0.6,3.4 8.2,6.4 8.2,19.6 0.6,14.4" fill="#b9b9b9" stroke="#3e3e3e" stroke-width="1.1700000000000002" stroke-linejoin="round"/></g>
<g transform="translate(1312.2 39.6)" ><defs><pattern id="hat" width="2.4" height="2.4" patternUnits="userSpaceOnUse" patternTransform="rotate(-45)"><rect width="2.4" height="2.4" fill="#7cc8ea"/><rect width="1.1" height="2.4" fill="#1d5f86"/></pattern></defs><path d="M0.8,5.4 Q10.8,-3.6 21,4 V15.4 Q19,17.6 16.4,16.6 V6 Q10.8,2.6 8.4,7.4 V17.6 Q5,21.4 0.8,18.6Z" fill="#eef2f4" stroke="#3a3a3a" stroke-width="1"/><path d="M0.8,7 Q4.6,9.6 8.4,7.4 V17.6 Q5,21.4 0.8,18.6Z" fill="url(#hat)" stroke="#174a66" stroke-width="1"/><path d="M16.4,6 Q19,6.4 21,4.6 V15.4 Q19,17.6 16.4,16.6Z" fill="url(#hat)" stroke="#174a66" stroke-width="1"/><path d="M8.4,7.4 Q10.8,3 16.4,6 V16.6 Q12,14 8.4,17.6Z" fill="#d9d9d9" stroke="#8a8a8a" stroke-width=".7"/></g>
</g>
<g fill="none" stroke="#2a2a2a" stroke-width="1.3"><path d="M1365.4,22.2H1377.2" stroke-width="1.9"/><rect x="1392.6" y="14.2" width="11" height="8"/><path d="M1396.6,14.2V10.4H1407.6V18.4H1403.8"/><path d="M1423.4,10.2L1434.8,21.8M1434.8,10.2L1423.4,21.8" stroke-width="1.35"/></g>
<g transform="translate(447.8 17) rotate(45) scale(.86)" filter="url(#soft2)"><path d="M-2.6,-6.4 H2.6 V-5 H1.6 V-1.2 L3.6,0.6 V1.6 H-3.6 V0.6 L-1.6,-1.2 V-5 H-2.6Z" fill="#3a7ca0" stroke="#2a6a8c" stroke-width=".6"/><path d="M0,1.6V6.6" stroke="#2a5a74" stroke-width="1.1"/></g>
</svg>
<svg id="lb" width="1440" height="810" viewBox="0 0 1440 810">
<defs>
<linearGradient id="Lbl" x1="0" y1="0" x2="1" y2="1"><stop offset="0" stop-color="#86cbe8"/><stop offset="1" stop-color="#3a88b2"/></linearGradient>
<linearGradient id="Lbl2" x1="0" y1="0" x2="0" y2="1"><stop offset="0" stop-color="#7cc4e4"/><stop offset="1" stop-color="#3f8fb8"/></linearGradient>
<linearGradient id="Lwh" x1="0" y1="0" x2="1" y2="1"><stop offset="0" stop-color="#ffffff"/><stop offset="1" stop-color="#c8c8c8"/></linearGradient>
<linearGradient id="Ltube" x1="0" y1="0" x2="1" y2="1"><stop offset="0" stop-color="#6a6a88"/><stop offset=".45" stop-color="#e6e6f2"/><stop offset="1" stop-color="#5a5a7c"/></linearGradient>
<linearGradient id="Ltubr" x1="0" y1="0" x2="1" y2="1"><stop offset="0" stop-color="#8a6a98"/><stop offset=".45" stop-color="#f0c0d0"/><stop offset="1" stop-color="#5a4a7c"/></linearGradient>
<linearGradient id="Lor" x1="0" y1="0" x2="0" y2="1"><stop offset="0" stop-color="#f8c850"/><stop offset=".6" stop-color="#e08a20"/><stop offset="1" stop-color="#8a3a10"/></linearGradient>
<linearGradient id="Lbar" x1="0" y1="0" x2="0" y2="1"><stop offset="0" stop-color="#3a3a4a"/><stop offset=".35" stop-color="#f4f4fa"/><stop offset=".7" stop-color="#9a9ac8"/><stop offset="1" stop-color="#1a1a50"/></linearGradient>
<linearGradient id="Lpv" x1="0" y1="0" x2="0" y2="1"><stop offset="0" stop-color="#2a2a5a"/><stop offset=".5" stop-color="#e8c0d0"/><stop offset="1" stop-color="#3a3a88"/></linearGradient>
<linearGradient id="Lph" x1="0" y1="0" x2="1" y2="0"><stop offset="0" stop-color="#2a2a5a"/><stop offset=".5" stop-color="#f0e0ea"/><stop offset="1" stop-color="#3a3a88"/></linearGradient>
<filter id="Lsoft" x="-5%" y="-5%" width="110%" height="110%"><feGaussianBlur stdDeviation="0.45"/></filter>
</defs>
<g stroke="#ababab" stroke-width="1.5" fill="none">
<path d="M31.6,68 V462 M65.8,68 V662.4 M31.6,462 V662.4 H65.8"/>
<path d="M1,462 H31.6 M66,462 H98.6" stroke="#a8a8a8" stroke-width="1.4"/>
<path d="M2.5,194.4 H28.5 M35.5,194.4 H63 M70,308.6 H97.5" stroke="#b0b0b0" stroke-width="1.2"/>
</g>
<line x1="2.5" y1="70.9" x2="29.5" y2="70.9" stroke="#8a8a8a" stroke-width="1.5" stroke-dasharray="1.25 1.75"/>
<line x1="35" y1="70.9" x2="64" y2="70.9" stroke="#8a8a8a" stroke-width="1.5" stroke-dasharray="1.25 1.75"/>
<line x1="69" y1="70.9" x2="98.5" y2="70.9" stroke="#8a8a8a" stroke-width="1.5" stroke-dasharray="1.25 1.75"/>
<path d="M99.4,404 H104 Q105.4,404 105.4,405.6 V430.4 Q105.4,432 104,432 H99.4Z" fill="#fafafa" stroke="#b0b0b0" stroke-width=".9"/><circle cx="101.8" cy="418" r="1.5" fill="none" stroke="#9a9a9a" stroke-width=".8"/>
<g filter="url(#Lsoft)">
<g transform="translate(3.0 81.6)" ><path d="M9.4,2.2 L13,0.6 L21,4.4 V18.4 L17.4,20.4 L9.4,16.4Z" fill="url(#Lwh)" stroke="#3a3a3a" stroke-width="1.1" stroke-linejoin="round"/><path d="M17.4,6.2 V20.4M9.4,2.2 L17.4,6.2 L21,4.4" fill="none" stroke="#3a3a3a" stroke-width="1"/><path d="M0.6,8.8 L3.6,6.6 L12.8,6.2 V13.6 L3.4,17.2 L0.6,15Z" fill="url(#Lbl2)" stroke="#1c5878" stroke-width="1.1" stroke-linejoin="round"/><path d="M0.6,8.8 L3.4,10.4 L12.8,9 M3.4,10.4V17.2" fill="none" stroke="#1c5878" stroke-width=".9"/></g>
<g transform="translate(5.2 110.0)" ><path d="M0.6,3.4 L12.6,0.6 L16.6,2.4 V16 L4.2,19.6 L0.6,17Z" fill="url(#Lwh)" stroke="#3a3a3a" stroke-width="1.1" stroke-linejoin="round"/><path d="M0.6,3.4 L4.2,5.6 L16.6,2.4M4.2,5.6V19.6" fill="none" stroke="#3a3a3a" stroke-width="1"/><path d="M6,8 L14.4,6 V13.6 L6,15.8Z" fill="#3f8fb8" stroke="#1c5878" stroke-width="1"/><path d="M7.8,8.6 L11.4,7.8 V12.6 L7.8,13.4Z" fill="#e8f2f8"/><path d="M6,14 L14.4,11.8" stroke="#a8d8ee" stroke-width="1.2"/></g>
<g transform="translate(3.0 138.2)" ><path d="M0.6,5 V16.6 Q0.8,20.6 10.4,21 Q20,20.6 20.4,16.6 V5Z" fill="#3a86ae" stroke="#2c4c5c" stroke-width="1.1"/><ellipse cx="10.5" cy="5" rx="9.9" ry="4.2" fill="#f4f4f4" stroke="#4a4a4a" stroke-width="1.1"/><path d="M1.6,9.6 Q10.4,13.4 19.4,9.6 M1.4,16 Q10.4,19.8 19.6,16" fill="none" stroke="#bfe2f2" stroke-width="1.2"/><g fill="#9fd4ec"><rect x="3.4" y="11.4" width="5" height="4.6"/><rect x="12.2" y="11.4" width="5" height="4.6"/></g><path d="M10.4,9.6V20.4" stroke="#d6ecf6" stroke-width="1.2"/></g>
<g transform="translate(4.3 168.0)" ><path d="M0.6,3.8 L10,0.6 L18.4,3.4 V15.6 L7.4,19.4 L0.6,15.4Z" fill="url(#Lwh)" stroke="#3a3a3a" stroke-width="1.1" stroke-linejoin="round"/><path d="M7.4,6.4 L18.4,3.4 V15.6 L7.4,19.4Z" fill="#7cc0e0" stroke="#1c5878" stroke-width="1"/><path d="M0.6,3.8 L7.4,6.4" stroke="#3a3a3a" stroke-width="1"/><path d="M10.4,8.6 L15.6,14 M15.6,8.2 L10.4,14.6" stroke="#1c1c24" stroke-width="2.6"/></g>
<g transform="translate(5.2 202.8)" ><path d="M0.6,3.6 Q4,0.4 9.6,0.6 Q16,1.2 17.6,5.6 V15.4 L7,19.6 L0.6,14.6Z" fill="url(#Lwh)" stroke="#3a3a3a" stroke-width="1.1" stroke-linejoin="round"/><path d="M4.4,3.4 Q8,0.6 13,1.6 Q16.8,3 17.4,6.4 Q17.4,9 15.6,9.6 L7,11.4 Q5.4,7 4.4,3.4Z" fill="url(#Lbl2)" stroke="#1c5878" stroke-width=".9"/><path d="M0.6,3.6 L7,11.4 V19.6" fill="none" stroke="#3a3a3a" stroke-width="1"/></g>
<g transform="translate(4.3 231.3)" ><path d="M0.6,8.6 L6.4,0.8 L11,0.6 L18.4,4.6 V15.6 L7,20 L0.6,14.8Z" fill="url(#Lwh)" stroke="#3a3a3a" stroke-width="1.1" stroke-linejoin="round"/><path d="M0.8,8.6 L6.4,0.8 L12.6,4.8 L6.6,12.6Z" fill="url(#Lbl2)" stroke="#1c5878" stroke-width=".9"/><path d="M6.6,12.6 V20 M12.6,4.8 L18.4,4.6" fill="none" stroke="#3a3a3a" stroke-width="1"/></g>
<g transform="translate(3.0 259.3)" ><path d="M0.6,9 Q3,5 7.4,4 Q9,2.6 12,4 L14,8 Q11,10.6 9.6,13.6 L5.6,15.6Z" fill="#fafafa" stroke="#6a6a6a" stroke-width="1"/><path d="M8.4,11.6 Q11,8.4 15,8 Q17,6.4 20,8 L21.2,12.4 Q18,14 16,17.6 L12.4,20.4Z" fill="url(#Lbl2)" stroke="#1c5878" stroke-width="1"/><path d="M14.4,0.6 Q18.6,1.8 18.4,6" fill="none" stroke="#111" stroke-width="1.4"/><polygon points="15.6,5.2 21.2,5.4 18.2,9.4" fill="#111"/><path d="M1,15.4 L4.4,19" stroke="#111" stroke-width="1.4"/><polygon points="2.4,21 7.2,21 6.4,16" fill="#111"/></g>
<g transform="translate(5.2 289.0)" ><g transform="translate(0 0)"><path d="M0.5,0.5 H3.5 V2.5 H6.2 V6.6 H3.5 V8.6 H0.5Z" fill="#4a9cc0" stroke="#1c5878" stroke-width="1"/></g><g transform="translate(10 0)"><path d="M0.5,0.5 H3.5 V2.5 H6.2 V6.6 H3.5 V8.6 H0.5Z" fill="#f8f8f8" stroke="#4a4a4a" stroke-width="1"/></g><g transform="translate(0 11.2)"><path d="M0.5,0.5 H3.5 V2.5 H6.2 V6.6 H3.5 V8.6 H0.5Z" fill="#f8f8f8" stroke="#4a4a4a" stroke-width="1"/></g><g transform="translate(10 11.2)"><path d="M0.5,0.5 H3.5 V2.5 H6.2 V6.6 H3.5 V8.6 H0.5Z" fill="#f8f8f8" stroke="#4a4a4a" stroke-width="1"/></g></g>
<g transform="translate(3.0 316.5)" ><path d="M6.4,0.6 H14.6 V3.4 H12.2 V6.6 H8.8 V3.4 H6.4Z" fill="#fafafa" stroke="#4a4a4a" stroke-width="1"/><path d="M6.4,20.6 H14.6 V17.8 H12.2 V14.8 H8.8 V17.8 H6.4Z" fill="#fafafa" stroke="#4a4a4a" stroke-width="1"/><path d="M0.6,6.6 H3.4 V9 H6.4 V12.4 H3.4 V14.8 H0.6Z" fill="#4a9cc0" stroke="#1c5878" stroke-width="1"/><path d="M20.6,6.6 H17.8 V9 H14.8 V12.4 H17.8 V14.8 H20.6Z" fill="#fafafa" stroke="#4a4a4a" stroke-width="1"/></g>
<g transform="translate(3.0 346.3)" ><path d="M0.6,3 H4.4 V7.6 H9 V13.6 H4.4 V18.6 H0.6Z" fill="url(#Lbl2)" stroke="#1c5878" stroke-width="1"/><path d="M21.4,3 H17.6 V7.6 H13 V13.6 H17.6 V18.6 H21.4Z" fill="#f6f6f6" stroke="#4a4a4a" stroke-width="1"/><path d="M11,0 V22" stroke="#6a6a6a" stroke-width="1.3"/></g>
<g transform="translate(7.0 374.0)" ><path d="M0.6,4 L13.4,1.6 V15.6 L0.6,18.6Z" fill="url(#Lbl2)" stroke="#1c5878" stroke-width="1.1"/><path d="M7,0 V21.4" stroke="#2a4a5a" stroke-width="1.2" stroke-dasharray="3 1.6"/></g>
<g transform="translate(3.0 402.8)" ><path d="M0.8,20 L20.6,0.8" stroke="#2c5a6c" stroke-width="1.7" stroke-dasharray="5 2 1.4 2"/></g>
<circle cx="13" cy="441.4" r="3.5" fill="#5a9cc0" stroke="#3a7ca0" stroke-width=".8"/>
<g transform="translate(38.9 82.9)" ><g transform="scale(1.0)"><path d="M1,10.4 L9.6,1.6 Q12.8,-0.4 15,2.4 Q16.4,5.2 14.6,7.4 L6,16 Q2.6,17.6 0.8,14.6 Q0,12.2 1,10.4Z" fill="url(#Ltube)" stroke="#2e2e48" stroke-width="1.2"/><ellipse cx="4" cy="12.6" rx="3.3" ry="3.5" fill="#e8e8f4" stroke="#2e2e48" stroke-width="1"/><ellipse cx="4" cy="12.6" rx="1.9" ry="2.1" fill="#5a5a80"/></g><g transform="translate(13.6 13.2)"><circle r="2.8" fill="#2f8fe8"/><g stroke="#2f8fe8" stroke-width="1.7"><path d="M0,-4.3V4.3M-4.3,0H4.3M-3,-3L3,3M3,-3L-3,3"/></g><circle r="1.2" fill="#a8e0ff"/></g></g>
<g transform="translate(38.9 111.4)" ><g transform="scale(1.0)"><path d="M1,10.4 L9.6,1.6 Q12.8,-0.4 15,2.4 Q16.4,5.2 14.6,7.4 L6,16 Q2.6,17.6 0.8,14.6 Q0,12.2 1,10.4Z" fill="url(#Ltube)" stroke="#2e2e48" stroke-width="1.2"/><ellipse cx="4" cy="12.6" rx="3.3" ry="3.5" fill="#e8e8f4" stroke="#2e2e48" stroke-width="1"/><ellipse cx="4" cy="12.6" rx="1.9" ry="2.1" fill="#5a5a80"/></g><path d="M16.2,9 l-5,5 l-1.6,-1.6 l-1,6.6 l6.6,-0.9 l-1.6,-1.6 l5,-5Z" fill="#30b028" stroke="#158015" stroke-width=".7" stroke-linejoin="round"/></g>
<g transform="translate(39.0 141.2)" ><rect x="0.4" y="5" width="6.4" height="4.6" fill="#3a3a9a" stroke="#1a1a5a" stroke-width=".8"/><path d="M5.6,3 Q10,-1 15,1.8 Q17.6,4 17.2,8.4 L16.8,12 L11,14.4 L8,11 Q5,8 5.6,3Z" fill="#e8a838" stroke="#7a3a10" stroke-width="1"/><path d="M8,11 L11,14.4 L16.8,12 V15.6 L11.2,16.8 L8.2,16.2Z" fill="#c8c8dc" stroke="#2a2a5a" stroke-width=".9"/><path d="M8,2 Q12,6 11,14" fill="none" stroke="#b05a1a" stroke-width="1"/><path d="M5,1 Q7,-0.4 9,0.4" stroke="#333" stroke-width=".9" fill="none"/></g>
<g transform="translate(39.3 170.6)" ><path d="M2,9 Q8,2 18.4,0.8 V7 Q11,8 7,13.6 Q4,15.6 1.6,13.6 Q0,11 2,9Z" fill="#f0f0f6" stroke="#1c1c4a" stroke-width="1.2"/><path d="M10,3.6 Q14,1.6 18.4,1 V6.8 Q14.6,7 11.6,9Z" fill="#e03a5a"/><path d="M14.6,2 L18.4,1.4 V6.6 L14.6,7Z" fill="#4a4a5a"/><path d="M2.6,9 Q9,2 18.4,1" fill="none" stroke="#2a2a6a" stroke-width="1.4"/><ellipse cx="4.6" cy="11.4" rx="3.4" ry="3.2" fill="#5a5aa8" stroke="#1a1a4a" stroke-width="1"/><ellipse cx="4.6" cy="11.4" rx="1.4" ry="1.3" fill="#a8a8e0"/></g>
<g transform="translate(39.0 204.0)" ><rect x="0.4" y="9.4" width="17" height="2.8" fill="#3a4a9a" stroke="#2a2a6a" stroke-width=".6"/><path d="M0.4,5.4 L11.4,0.6 L17.4,5 V8 L10.6,16.6 L4.6,12Z" fill="#d8782a" stroke="#7a3410" stroke-width="1"/><path d="M9.4,6 L15.4,5 Q17.6,5.4 17.8,8 V11 Q17,12.6 15,12.4 L11,11Z" fill="#e6e6f4" stroke="#2a2a5a" stroke-width="1"/><ellipse cx="16" cy="8.6" rx="1.6" ry="3.2" fill="#8a8ac8" stroke="#2a2a5a" stroke-width=".8"/></g>
<g transform="translate(39.0 232.0)" ><rect x="0.4" y="5.4" width="10.6" height="6.6" fill="url(#Lor)" stroke="#5a2a0a" stroke-width=".9"/><path d="M9,14.4 L13.4,2.4 Q15.4,-0.2 17.6,1.6 Q18.6,3.4 17.8,5.4 L12,17.6 Q10,18.4 8.6,17Z" fill="url(#Ltube)" stroke="#2a2a5a" stroke-width="1.1"/><path d="M1.6,17.6 L5.6,11.6" stroke="#4a7a9a" stroke-width="1.3"/><ellipse cx="15.6" cy="3" rx="2" ry="1.3" transform="rotate(25 15.6 3)" fill="#d8d8ec" stroke="#2a2a5a" stroke-width=".7"/></g>
<g transform="translate(39.0 261.0)" ><path d="M0.4,10.6 H6 L8.4,13 L11.4,10.6 H18 V16.6 H0.4Z" fill="url(#Lor)" stroke="#5a2a0a" stroke-width=".9"/><path d="M7,11 L12,1.6 Q14.6,0 17,1.6 Q17.8,3.4 17,5 L11.4,13.4Z" fill="url(#Ltube)" stroke="#2a2a5a" stroke-width="1.1"/></g>
<g transform="translate(39.0 289.4)" ><path d="M0.4,10.6 H6 L8.4,13 L11.4,10.6 H18 V16.6 H0.4Z" fill="url(#Lor)" stroke="#5a2a0a" stroke-width=".9"/><path d="M7,11 L12,1.6 Q14.6,0 17,1.6 Q17.8,3.4 17,5 L11.4,13.4Z" fill="url(#Ltube)" stroke="#2a2a5a" stroke-width="1.1"/><path d="M2.4,19.6 L7,12.4 M5.6,19.6 L9.6,13.4" stroke="#3a3a6a" stroke-width="1.2"/></g>
<g transform="translate(40.6 317.8)" ><path d="M0.6,9 L13.6,0.6 L16.6,3 L8.4,9Z" fill="url(#Lph)" stroke="#1a1a3a" stroke-width="1"/><path d="M0.6,9 L8.4,9 L16.6,15.6 L13.4,17.8Z" fill="url(#Lor)" stroke="#4a2408" stroke-width="1"/><path d="M0.6,9 L9.6,1.6" stroke="#2a2a4a" stroke-width="1"/></g>
<g transform="translate(40.6 346.7)" ><path d="M0.6,9 L13.6,0.6 L16.6,3 L8.4,9Z" fill="url(#Lor)" stroke="#4a2408" stroke-width="1"/><path d="M0.6,9 L8.4,9 L16.6,15.6 L13.4,17.8Z" fill="url(#Lor)" stroke="#4a2408" stroke-width="1"/></g>
<g transform="translate(38.9 375.0)" ><g transform="scale(1.0)"><path d="M1,10.4 L9.6,1.6 Q12.8,-0.4 15,2.4 Q16.4,5.2 14.6,7.4 L6,16 Q2.6,17.6 0.8,14.6 Q0,12.2 1,10.4Z" fill="url(#Ltubr)" stroke="#2e2e48" stroke-width="1.2"/><ellipse cx="4" cy="12.6" rx="3.3" ry="3.5" fill="#e8e8f4" stroke="#2e2e48" stroke-width="1"/><ellipse cx="4" cy="12.6" rx="1.9" ry="2.1" fill="#5a5a80"/></g><g transform="translate(10.2 9.4)"><path d="M0,6.6 L5.4,1 L7.6,3.2 L2,8.6 L-0.6,9.2Z" fill="#6cc0f0" stroke="#9ad4f4" stroke-width=".7"/></g><path d="M0.4,18.4 H9.6" stroke="#e07a7a" stroke-width="1"/></g>
<g transform="translate(38.9 404.0)" ><g transform="scale(1.0)"><path d="M1,10.4 L9.6,1.6 Q12.8,-0.4 15,2.4 Q16.4,5.2 14.6,7.4 L6,16 Q2.6,17.6 0.8,14.6 Q0,12.2 1,10.4Z" fill="url(#Ltubr)" stroke="#2e2e48" stroke-width="1.2"/><ellipse cx="4" cy="12.6" rx="3.3" ry="3.5" fill="#e8e8f4" stroke="#2e2e48" stroke-width="1"/><ellipse cx="4" cy="12.6" rx="1.9" ry="2.1" fill="#5a5a80"/></g><g transform="translate(10.2 9.4)"><path d="M0,6.6 L5.4,1 L7.6,3.2 L2,8.6 L-0.6,9.2Z" fill="#6cc0f0" stroke="#9ad4f4" stroke-width=".7"/></g><path d="M0.4,18.4 H9.6" stroke="#e07a7a" stroke-width="1"/></g>
<g transform="translate(38.9 432.8)" ><g transform="scale(1.0)"><path d="M1,10.4 L9.6,1.6 Q12.8,-0.4 15,2.4 Q16.4,5.2 14.6,7.4 L6,16 Q2.6,17.6 0.8,14.6 Q0,12.2 1,10.4Z" fill="url(#Ltubr)" stroke="#2e2e48" stroke-width="1.2"/><ellipse cx="4" cy="12.6" rx="3.3" ry="3.5" fill="#e8e8f4" stroke="#2e2e48" stroke-width="1"/><ellipse cx="4" cy="12.6" rx="1.9" ry="2.1" fill="#5a5a80"/></g><g stroke="#2a6ad0" stroke-width="1.1" fill="none"><path d="M7,12 L16,15.6 M7.6,16.4 L16,10.6"/><circle cx="17" cy="10" r="1.5"/><circle cx="17" cy="16.2" r="1.5"/></g><path d="M0.4,18 H7" stroke="#e07a7a" stroke-width="1"/></g>
<g transform="translate(39.2 461.3)" ><path d="M0.6,0.6 H18 V6.6 H7.6 V17.6 H0.6Z" fill="#fafafa" stroke="none"/><rect x="7.6" y="0.8" width="10.4" height="6" fill="url(#Lpv)"/><rect x="0.8" y="7" width="7" height="10.6" fill="url(#Lph)"/><path d="M0.8,0.8 L7.6,6.8" stroke="#111" stroke-width="1.2"/><path d="M0.8,0.8 H18 M0.8,0.8 V17.6" stroke="#16161e" stroke-width="1.3" fill="none"/><path d="M2.4,1.6 L7.6,6.4" stroke="#f4f4f4" stroke-width="1.1"/><g transform="translate(10.4 9.4)"><path d="M0,6.6 L5.4,1 L7.6,3.2 L2,8.6 L-0.6,9.2Z" fill="#6cc0f0" stroke="#9ad4f4" stroke-width=".7"/></g><path d="M0.4,18.4 H9.6" stroke="#e07a7a" stroke-width="1"/></g>
<g transform="translate(39.8 490.6)" ><path d="M0.6,0.6 H18 V6.6 H7.6 V17.6 H0.6Z" fill="#fafafa" stroke="none"/><rect x="7.6" y="0.8" width="10.4" height="6" fill="url(#Lpv)"/><rect x="0.8" y="7" width="7" height="10.6" fill="url(#Lph)"/><path d="M0.8,0.8 L7.6,6.8" stroke="#111" stroke-width="1.2"/><path d="M0.8,0.8 H18 M0.8,0.8 V17.6" stroke="#16161e" stroke-width="1.3" fill="none"/><path d="M2.4,1.6 L7.6,6.4" stroke="#f4f4f4" stroke-width="1.1"/><path d="M2.6,2.6 H5.4 V5.4" stroke="#e04a6a" stroke-width=".9" fill="none"/></g>
<g transform="translate(39.0 519.0)" ><rect x="0.6" y="0.4" width="4.6" height="17.6" fill="url(#Lpv)"/><rect x="13.6" y="0.4" width="4.6" height="17.6" fill="url(#Lpv)"/><rect x="5" y="6" width="9" height="5.6" fill="#e8d0dc"/><path d="M5.4,4 H8 V7 M5.4,13.6 H8 V11 M10,8.6 H13.4" stroke="#d83a5a" stroke-width=".9" fill="none"/></g>
<g transform="translate(39.0 547.8)" ><rect x="0.6" y="0.4" width="7" height="17.6" fill="url(#Lpv)"/><rect x="3" y="5" width="2.2" height="9" fill="#f8f0f4" stroke="#d83a5a" stroke-width=".6"/><rect x="14" y="0.4" width="4.2" height="17.6" fill="url(#Lpv)"/><path d="M9.6,5 V9 Q10,11 14,10.6" stroke="#c84a6a" stroke-width="2.2" fill="none"/></g>
<g transform="translate(39.8 576.3)" ><rect x="7.2" y="0.8" width="9.8" height="7" rx="1.2" fill="#f4f4f8" stroke="#26263a" stroke-width="1.4"/><rect x="9.2" y="3.2" width="5.8" height="2.4" fill="#3a3a7a"/><circle cx="5.2" cy="11" r="4.6" fill="#f4f4f8" stroke="#26263a" stroke-width="1.4"/><circle cx="5.2" cy="11" r="2.3" fill="#6a6aa8" stroke="#2a2a5a" stroke-width=".7"/><g transform="translate(12.6 13.4)"><circle r="2.8" fill="#2f8fe8"/><g stroke="#2f8fe8" stroke-width="1.7"><path d="M0,-4.3V4.3M-4.3,0H4.3M-3,-3L3,3M3,-3L-3,3"/></g><circle r="1.2" fill="#a8e0ff"/></g></g>
<g transform="translate(39.8 605.0)" ><rect x="7.2" y="0.8" width="9.8" height="7" rx="1.2" fill="#f4f4f8" stroke="#26263a" stroke-width="1.4"/><rect x="9.2" y="3.2" width="5.8" height="2.4" fill="#3a3a7a"/><circle cx="5.2" cy="11" r="4.6" fill="#f4f4f8" stroke="#26263a" stroke-width="1.4"/><circle cx="5.2" cy="11" r="2.3" fill="#6a6aa8" stroke="#2a2a5a" stroke-width=".7"/><g fill="none" stroke="#e89a2a" stroke-width="1.5"><circle cx="12" cy="7.4" r="1.6"/><circle cx="14.6" cy="11" r="1.6"/><circle cx="12.4" cy="14" r="1.6"/><circle cx="15" cy="16.4" r="1.4"/></g></g>
<g transform="translate(39.8 633.3)" ><rect x="7.2" y="0.8" width="9.8" height="7" rx="1.2" fill="#f4f4f8" stroke="#26263a" stroke-width="1.4"/><rect x="9.2" y="3.2" width="5.8" height="2.4" fill="#3a3a7a"/><circle cx="5.2" cy="11" r="4.6" fill="#f4f4f8" stroke="#26263a" stroke-width="1.4"/><circle cx="5.2" cy="11" r="2.3" fill="#6a6aa8" stroke="#2a2a5a" stroke-width=".7"/><path d="M6.4,14 L10,10.4 V12.6 H13.4 V10.4 L17.2,14 L13.4,17.8 V15.6 H10 V17.8Z" fill="#d82a2a" stroke="#7a1414" stroke-width=".8" stroke-linejoin="round"/></g>
<g transform="translate(73.5 82.4)" ><g transform="translate(6 0.4)"><path d="M0,0 H5 L4.4,5.6 L2.6,8 L0.6,5.6Z" fill="#e8a050" stroke="#6a3a1a" stroke-width=".9"/><path d="M2.6,0.4V5" stroke="#fff" stroke-width=".8" opacity=".7"/></g><path d="M0.6,4.6 L5,10" stroke="#9a9a9a" stroke-width="2.2"/><path d="M0.4,5.6 L4,10.4" stroke="#c8b090" stroke-width="1"/><path d="M8.6,8 V10 Q8,14 6.4,18.4" fill="none" stroke="#2a2a2a" stroke-width="1.2"/><path d="M7.4,18 Q9,9.6 18.4,9.4 M10.2,18.2 Q11.4,12.4 18.4,12.2" fill="none" stroke="#3a3a3a" stroke-width="1.4"/><path d="M8.8,18 Q10.2,11 18.4,10.8" fill="none" stroke="#e8e8e8" stroke-width="1.2"/></g>
<g transform="translate(73.5 111.8)" ><rect x="0.4" y="8.4" width="13" height="6.6" fill="url(#Lbar)"/><path d="M1,0.6 Q4,-0.4 6.4,1.6 L9,6.4 L7,7 L3,4Z" fill="#d89040" stroke="#4a2a10" stroke-width=".9"/><path d="M7.6,6 L11,10.4 Q14.6,12 16.4,15.4 L10.6,15.4 Q10,12 7.6,8.4Z" fill="#1e1e22" stroke="#111" stroke-width=".8"/></g>
<g transform="translate(73.5 140.0)" ><rect x="0.4" y="8.6" width="14" height="6.6" fill="url(#Lbar)"/><path d="M1,0.6 L4.4,0.2 L9.6,6.6 L8,8.4 L3.6,5.4Z" fill="#2a3a9a" stroke="#14145a" stroke-width=".9"/><path d="M8,7.6 L11.6,11.4 Q15,13 16.4,15.6 L11,15.8 Q10,12 7.6,9.6Z" fill="#1a2a7a" stroke="#111" stroke-width=".8"/><path d="M13.4,8.6 L15.4,1.6 Q16.6,-0.2 18.2,1 L16,9.4Z" fill="#e0a030" stroke="#6a4410" stroke-width=".9"/></g>
<g transform="translate(73.5 169.0)" ><g opacity=".9"><path d="M1,0.6 Q4,-0.4 6.4,1.6 L10,7.4 L8,8 L3,4Z" fill="#dadada" stroke="#c6c6c6" stroke-width=".9"/><path d="M8,8 L11.4,11 Q15,12.6 17,16 L1,16 L6,9.6Z" fill="#d6d6d6" stroke="#c8c8c8"/><path d="M0.6,13 H12" stroke="#c0c0c0" stroke-width="1.6"/><path d="M16.4,1.6 V7.6 M16.4,9.6 V11" stroke="#c8c8c8" stroke-width="1.4"/></g></g>
<g transform="translate(74.0 196.7)" ><g transform="translate(13.6 0.2)"><path d="M0,0 H5 L4.4,5.6 L2.6,8 L0.6,5.6Z" fill="#d8a050" stroke="#6a3a1a" stroke-width=".9"/><path d="M2.6,0.4V5" stroke="#fff" stroke-width=".8" opacity=".7"/></g><path d="M3.6,0.8 L9.6,5.8 M5.6,0.6 L11,5" stroke="#9a9a9a" stroke-width="1.2"/><path d="M16.2,7 V13.4" stroke="#222" stroke-width="1.1"/><path d="M1.4,14 L6,8.6 L10.6,14" fill="none" stroke="#1a1a1a" stroke-width="1.2"/><path d="M10.6,14 H16.6" stroke="#1a1a1a" stroke-width="1.1" stroke-dasharray="1.6 1.4"/><g fill="#1a1a1a"><rect x="0.2" y="12.6" width="2.8" height="2.8"/><circle cx="6" cy="8.6" r="1.5"/><rect x="9.2" y="12.6" width="2.8" height="2.8"/><rect x="15" y="12.6" width="2.8" height="2.8"/></g></g>
<g transform="translate(74.0 225.7)" ><rect x="0.4" y="8.4" width="13" height="6.6" fill="url(#Lbar)"/><path d="M1,0.6 Q4,-0.4 6.4,1.6 L9,6.4 L7,7 L3,4Z" fill="#d89040" stroke="#4a2a10" stroke-width=".9"/><path d="M7.6,6 L11,10.4 Q14.6,12 16.4,15.4 L10.6,15.4 Q10,12 7.6,8.4Z" fill="#1e1e22" stroke="#111" stroke-width=".8"/><path d="M9.6,0.6 L15.6,7" stroke="#d82a4a" stroke-width="1.3"/><polygon points="17.4,9 13.2,7.6 16.4,4.6" fill="#d82a4a"/></g>
<g transform="translate(73.5 255.0)" ><g><path d="M1,2 L7,9 M4,0.6 L9,7" stroke="#d0d0d0" stroke-width="1.6"/><path d="M9,0 Q11.6,3 10,8 L8,9Z" fill="#d8d8d8"/><path d="M2,10 H11 V15.6 H2Z" fill="#d2d2d2"/><path d="M15.6,4 L13.4,9.6 H16 L14,15" fill="none" stroke="#cacaca" stroke-width="1.6"/></g></g>
<g transform="translate(74.0 284.4)" ><path d="M0.6,0.6 L5.6,7.6 M2.4,0.4 Q6,2 6,7" fill="none" stroke="#2a2a2a" stroke-width="1.2"/><path d="M0.6,0.6 Q4,1 5.6,7.6 L3,5Z" fill="#5a3a1a"/><path d="M11.6,1.6 H17 V14 H1.4 V10.4 H11.6Z" fill="#f4f4f8" stroke="#d81a2a" stroke-width="1.5" stroke-linejoin="round"/><rect x="12.6" y="2.8" width="3.4" height="8.6" fill="#3a3a9a"/><path d="M2.6,12.4 H16" stroke="#5a5a6a" stroke-width="1"/><path d="M4.6,7.6 L7.6,10.4" stroke="#d81a2a" stroke-width="1.2"/></g>
<g transform="translate(74.0 318.2)" ><path d="M0.4,8 H6.6 Q9,11 11.6,8 H18 V15 H0.4Z" fill="url(#Lor)" stroke="#5a2a0a" stroke-width=".9"/><path d="M6.4,0.4 H12 V5 Q11.6,8 9.2,8.6 Q6.8,8 6.4,5Z" fill="#2a4a9a" stroke="#14245a" stroke-width=".9"/></g>
<g transform="translate(75.6 349.3)" ><path d="M2,7 L9.4,1 Q12.4,-0.4 14,2.2 Q15.2,5 13.4,7 L6,12.8 Q3,14 1.2,11.6 Q0,9 2,7Z" fill="url(#Ltube)" stroke="#1e1e2a" stroke-width="1.2"/><ellipse cx="3.8" cy="9.8" rx="2.8" ry="3.3" transform="rotate(35 3.8 9.8)" fill="#f2f2f6" stroke="#1e1e2a" stroke-width="1"/></g>
<g transform="translate(75.2 376.0)" ><path d="M5,1.4 Q9,-0.6 15.6,5 L11.4,14.6 L8.6,17.6 L6.6,12.6 L0.6,10.4Z" fill="url(#Ltube)" stroke="#1a1a3a" stroke-width="1"/><path d="M5,1.4 Q9,-0.6 15.6,5 L14.6,7 Q9,2.4 4.4,3.4Z" fill="#2a2a4a"/><path d="M6.6,12.6 L8.6,17.6 L11.4,14.6 L14,8Z" fill="#1a1a4a"/><path d="M0.6,10.4 L5,9.6 L6.6,12.6Z" fill="#c8a878"/></g>
<g transform="translate(74.8 405.4)" ><rect x="0.8" y="0.8" width="16.2" height="14.2" fill="#e2e2e2" stroke="#2e2e2a" stroke-width="1.1"/><path d="M1.4,1.4 H11.4 Q10,4 12,6.4 Q15,8.6 14.4,14.4 H1.4Z" fill="#d8d8d8" stroke="#3a3a3a" stroke-width="1"/><path d="M12,1.4 Q10.6,4 13,6 Q15.6,8 16.4,10 V1.4Z" fill="#f4f4f4"/><ellipse cx="7.4" cy="10.4" rx="2.6" ry="1.5" fill="#fafafa" stroke="#3a3a3a" stroke-width=".9"/></g>
<g transform="translate(74.0 432.8)" ><rect x="0.6" y="0.6" width="13" height="17" fill="#f8f8fa" stroke="#2a2a2a" stroke-width="1.2"/><path d="M2.6,4.6H10M2.6,7.6H10M2.6,10.6H10M2.6,13.6H11" stroke="#6a6a9a" stroke-width="1.3" stroke-dasharray="1.4 .8 8"/><circle cx="12.6" cy="7" r="5.2" fill="#d81a1a" stroke="#8a0a0a" stroke-width=".8"/><path d="M12.6,3.6 L11,6.6 H13.4 L12.2,10.4" fill="none" stroke="#ffd8c8" stroke-width="1.4"/></g>
</g>
</svg>
<svg id="rb" width="1440" height="810" viewBox="0 0 1440 810">
<defs><filter id="Rsoft" x="-5%" y="-5%" width="110%" height="110%"><feGaussianBlur stdDeviation="0.45"/></filter><clipPath id="rclip"><rect x="1409" y="66" width="30.2" height="703"/></clipPath></defs>
<rect x="1409" y="67" width="31" height="700" fill="#f7f7f7"/>
<rect x="1409" y="67" width="1.2" height="700" fill="#fcfcfc"/>
<g clip-path="url(#rclip)"><g filter="url(#Rsoft)">
<line x1="1414" y1="71" x2="1440" y2="71" stroke="#8a8a8a" stroke-width="1.5" stroke-dasharray="1.25 1.75"/>
<line x1="1414.5" y1="165.6" x2="1440" y2="165.6" stroke="#a0a0a0" stroke-width="1.1"/>
<line x1="1411" y1="766.6" x2="1440" y2="766.6" stroke="#9c9c9c" stroke-width="1.2"/>
<g stroke="#dcdcdc" stroke-width=".5"><path d="M1422.0,84.0 V99.0"/><path d="M1420,85.0 H1440"/><path d="M1425.0,84.0 V99.0"/><path d="M1420,87.8 H1440"/><path d="M1428.0,84.0 V99.0"/><path d="M1420,90.6 H1440"/><path d="M1431.0,84.0 V99.0"/><path d="M1420,93.4 H1440"/><path d="M1434.0,84.0 V99.0"/><path d="M1420,96.2 H1440"/><path d="M1437.0,84.0 V99.0"/><path d="M1420,99.0 H1440"/></g><path d="M1433,82.8 H1418.2 V94.0 Q1418.6,100.6 1425,100.8 H1440" fill="none" stroke="#3c4a56" stroke-width="1.7"/>
<g stroke="#dcdcdc" stroke-width=".5"><path d="M1422.0,113.0 V128.0"/><path d="M1420,114.0 H1440"/><path d="M1425.0,113.0 V128.0"/><path d="M1420,116.8 H1440"/><path d="M1428.0,113.0 V128.0"/><path d="M1420,119.6 H1440"/><path d="M1431.0,113.0 V128.0"/><path d="M1420,122.4 H1440"/><path d="M1434.0,113.0 V128.0"/><path d="M1420,125.2 H1440"/><path d="M1437.0,113.0 V128.0"/><path d="M1420,128.0 H1440"/></g><path d="M1433,111.8 H1418.2 V123.0 Q1418.6,129.6 1425,129.8 H1440" fill="none" stroke="#3c4a56" stroke-width="1.7"/>
<rect x="1423.6" y="117.4" width="17" height="9.8" fill="#f7f7f7"/><text x="1424.4" y="126.2" font-family="Liberation Sans,sans-serif" font-weight="bold" font-size="9.6" fill="#1e1e1e" letter-spacing="-.2">3D</text>
<path d="M1437.4,148.4 L1429,139.8 M1417.6,150.2 L1426.4,158.8" fill="none" stroke="#3a4a58" stroke-width="1.3"/><path d="M1417.6,150.2 L1429,139.8" stroke="#111" stroke-width="1.3"/><polygon points="1417.4,150.4 1421.6,149.4 1419.4,146.6" fill="#111"/><polygon points="1429.2,139.6 1425,140.6 1427.2,143.4" fill="#111"/>
<path d="M1418,193 L1436,175" stroke="#4a6878" stroke-width="1.6"/><circle cx="1418.0" cy="193.0" r="1.5" fill="#f4f4f4" stroke="#3a3a3a" stroke-width="1"/><circle cx="1436.0" cy="175.0" r="1.5" fill="#f4f4f4" stroke="#3a3a3a" stroke-width="1"/>
<rect x="1418.2" y="206.8" width="18.2" height="11.6" fill="none" stroke="#4a6878" stroke-width="1.5"/><circle cx="1418.2" cy="218.4" r="1.5" fill="#f4f4f4" stroke="#3a3a3a" stroke-width="1"/><circle cx="1436.4" cy="206.8" r="1.5" fill="#f4f4f4" stroke="#3a3a3a" stroke-width="1"/>
<path d="M1418.4,248.6 L1424.6,234 H1437 L1430.8,248.6Z" fill="none" stroke="#4a6878" stroke-width="1.5"/><circle cx="1418.4" cy="248.6" r="1.5" fill="#f4f4f4" stroke="#3a3a3a" stroke-width="1"/><circle cx="1430.8" cy="248.6" r="1.5" fill="#f4f4f4" stroke="#3a3a3a" stroke-width="1"/><circle cx="1437.0" cy="234.0" r="1.5" fill="#f4f4f4" stroke="#3a3a3a" stroke-width="1"/>
<polygon points="1417,270 1422.2,260.8 1432.6,260.8 1437.6,270 1432.6,279 1422.2,279" fill="#eef6fa" stroke="#4a6878" stroke-width="1.5"/><rect x="1426.0" y="268.8" width="2.4" height="2.4" fill="#f4f4f4" stroke="#2a2a2a" stroke-width=".9"/>
<circle cx="1427" cy="298.4" r="9.8" fill="#f2f8fb" stroke="#4a6878" stroke-width="1.5"/><rect x="1426.0" y="297.2" width="2.4" height="2.4" fill="#f4f4f4" stroke="#2a2a2a" stroke-width=".9"/><rect x="1432.7" y="290.3" width="2.6" height="2.6" fill="#f4f4f4" stroke="#2a2a2a" stroke-width=".9"/>
<circle cx="1427.4" cy="328" r="9.6" fill="none" stroke="#d8d8d8" stroke-width="1.2" stroke-dasharray="1.6 2.6"/><path d="M1419.4,321.4 Q1428,313.6 1436,324.6" fill="none" stroke="#4a6878" stroke-width="1.5"/><path d="M1419.4,321.4 L1427.4,328" stroke="#111" stroke-width="1.5"/><rect x="1418.2" y="320.2" width="2.4" height="2.4" fill="#f4f4f4" stroke="#2a2a2a" stroke-width=".9"/><circle cx="1427.4" cy="328.0" r="1.5" fill="#f4f4f4" stroke="#3a3a3a" stroke-width="1"/><rect x="1434.8" y="323.4" width="2.4" height="2.4" fill="#f4f4f4" stroke="#2a2a2a" stroke-width=".9"/>
<path d="M1417,347 H1428" stroke="#2a2a2a" stroke-width="1.5"/><path d="M1428,347 Q1437.4,349 1437.2,356 Q1436.6,363 1428,364.8" fill="none" stroke="#4a6878" stroke-width="1.5"/><circle cx="1428.0" cy="347.0" r="1.5" fill="#f4f4f4" stroke="#3a3a3a" stroke-width="1"/><circle cx="1427.8" cy="364.8" r="1.5" fill="#f4f4f4" stroke="#3a3a3a" stroke-width="1"/>
<path d="M1418,389 Q1419.6,379.6 1427.2,379.4 Q1434.6,379.6 1436.2,389" fill="none" stroke="#4a6878" stroke-width="1.5"/><circle cx="1418.0" cy="389.0" r="1.5" fill="#f4f4f4" stroke="#3a3a3a" stroke-width="1"/><circle cx="1436.2" cy="389.0" r="1.5" fill="#f4f4f4" stroke="#3a3a3a" stroke-width="1"/><circle cx="1427.2" cy="379.4" r="1.3" fill="#f4f4f4" stroke="#3a3a3a" stroke-width="1"/>
<rect x="1417.4" y="407" width="19.6" height="12.8" rx="6.4" fill="#f2f8fb" stroke="#3c4a56" stroke-width="1.6"/><rect x="1421.4" y="412.2" width="2.4" height="2.4" fill="#f4f4f4" stroke="#2a2a2a" stroke-width=".9"/><rect x="1430.4" y="412.2" width="2.4" height="2.4" fill="#f4f4f4" stroke="#2a2a2a" stroke-width=".9"/>
<path d="M1418,450 Q1421,428 1427,436 Q1432,458 1438.6,430" fill="none" stroke="#4a6878" stroke-width="1.7"/>
<path d="M1417,470.4 Q1422,465 1426,466.6 Q1428,462.6 1431.4,462 L1436.4,469 Q1433,470.6 1431.6,474 Q1427,473.6 1423.6,479.4Z" fill="#eef6fa" stroke="#3a3a3a" stroke-width="1.2"/><path d="M1423.4,470.6 Q1425,466.6 1427,469.4 Q1429,473.6 1431,468.4" fill="none" stroke="#2f6a8c" stroke-width="1.5"/>
<path d="M1418,508 L1436,490.6" stroke="#2a3a46" stroke-width="1.5" stroke-dasharray="3 1.8"/><rect x="1416.8" y="506.8" width="2.4" height="2.4" fill="#f4f4f4" stroke="#2a2a2a" stroke-width=".9"/><rect x="1434.8" y="489.4" width="2.4" height="2.4" fill="#f4f4f4" stroke="#2a2a2a" stroke-width=".9"/>
<g stroke="#cdcdcd" fill="none" stroke-width="1.2"><path d="M1418.6,518 V536.6 M1435.8,518 V536.6" stroke-dasharray="1.2 1"/><path d="M1422,523.4 H1431 M1431.6,531 H1423"/><path d="M1428.6,520.6 L1432,523.4 L1428.6,526.2 M1426,528.2 L1422.6,531 L1426,533.8"/></g>
<rect x="1423.6" y="553" width="7.2" height="6.8" fill="#4a8fb4" stroke="#24506a" stroke-width="1"/><rect x="1425" y="554.4" width="4.4" height="2" fill="#8ec8e4"/>
<path d="M1416.6,575.6 H1430 Q1437,576.4 1437.2,584 V595.4" fill="none" stroke="#cdcdcd" stroke-width="1.4"/>
<path d="M1431,603.8 H1417.6 V617 Q1418,623.6 1425,623.8 H1438" fill="none" stroke="#cdcdcd" stroke-width="1.4"/><path d="M1430,607.6 H1421.6 V616 Q1422,620 1426,620 H1434" fill="none" stroke="#cdcdcd" stroke-width="1.3"/>
<g stroke="#cdcdcd" fill="none" stroke-width="1.5"><circle cx="1420" cy="634.6" r="2.6"/><circle cx="1420.4" cy="645" r="2.8"/><path d="M1422.4,636 L1436,647 M1422.6,643.6 L1436.6,632.6"/><path d="M1417,651 H1437.6 M1433.6,631 V652.6" stroke-width="1.1"/></g>
<path d="M1417,663.6 H1437.4" stroke="#cdcdcd" stroke-width="1.2"/><path d="M1427,664 V682" stroke="#cdcdcd" stroke-width="1.1" stroke-dasharray="2.4 1"/>
<text x="1427.2" y="709.8" text-anchor="middle" font-family="Liberation Serif,serif" font-size="28" fill="#d4eaf4" stroke="#4a6478" stroke-width="1">A</text>
<g stroke="#cdcdcd" fill="none" stroke-width="1.2"><path d="M1425,718.4 V737"/><rect x="1425" y="729" width="7" height="8"/><path d="M1417.6,737.4 H1437.2" stroke-width="1.3" stroke="#c0c0c0"/></g>
<path d="M1425.2,753.2 L1427.8,755.6 L1430.4,753.2 M1425.2,756.6 L1427.8,759 L1430.4,756.6" fill="none" stroke="#3a3a3a" stroke-width="1"/>
</g></g>
<rect x="1439" y="2" width="1" height="782" fill="#161616"/>
<g fill="none" stroke="#7f8794" stroke-width="1" filter="url(#Rsoft)"><rect x="1268.4" y="76.6" width="12.6" height="14.6"/><path d="M1268.4,77.4H1281" stroke-width="1.6"/><polygon points="1269.8,84 1272.4,82 1272.4,86" fill="#7f8794" stroke="none"/><rect x="1297.4" y="76.6" width="12.6" height="14.6"/><path d="M1297.4,77.4H1310" stroke-width="1.6"/><polygon points="1309,84 1306.4,82 1306.4,86" fill="#7f8794" stroke="none"/><path d="M1326.6,90.2H1338" stroke-width="1.5"/><rect x="1353.6" y="81.6" width="10.6" height="8"/><path d="M1356.6,81.6V78.6H1367.4V86.4H1364.2"/><path d="M1384,78.2L1395.4,89.8M1395.4,78.2L1384,89.8" stroke-width="1.2"/></g>
<polygon points="1404.4,778.4 1408.2,778.4 1406.3,775.6" fill="#222"/>
<g filter="url(#Rsoft)"><path d="M1429.6,774.6 L1434.6,771.4 L1441,774.6 V779.6 L1436,783 L1429.6,779.6Z" fill="#e6e6e6" stroke="#3a3a3a" stroke-width="1.1"/><path d="M1429.6,774.6 L1436,778 L1441,774.6 M1436,778 V783" fill="none" stroke="#3a3a3a" stroke-width=".9"/><circle cx="1434.2" cy="774.6" r="1" fill="none" stroke="#3a3a3a" stroke-width=".7"/></g>
<g filter="url(#Rsoft)">
<path d="M128,727 V712" stroke="#28c828" stroke-width="2.4"/><polygon points="128,708 125.2,714.4 130.8,714.4" fill="#28c828"/>
<path d="M128,727 L118.6,732.6" stroke="#1818c0" stroke-width="2.6"/><polygon points="114,735.6 120.6,735.4 118,730.2" fill="#1818c0"/>
<path d="M128,727 L137.6,732.6" stroke="#c81e1e" stroke-width="2.6"/><polygon points="142.6,735.4 136,735.6 138.4,730.2" fill="#c81e1e"/>
<text x="128.1" y="705.6" text-anchor="middle" font-family="Liberation Sans,sans-serif" font-size="5.6" fill="#58c858">Y</text>
<text x="109.6" y="738.6" text-anchor="middle" font-family="Liberation Sans,sans-serif" font-size="5.6" fill="#3838c8">Z</text>
<text x="147.6" y="738.6" text-anchor="middle" font-family="Liberation Sans,sans-serif" font-size="5.6" fill="#d86a6a">X</text>
</g>
<rect x="0" y="783" width="30" height="27" fill="#0a0a0a"/><g fill="#f4f4f4" filter="url(#Rsoft)"><path d="M8.6,793.4 L14.2,792.6 V797.6 H8.6Z M15,792.5 L21.6,791.6 V797.6 H15Z M8.6,798.4 H14.2 V803.4 L8.6,802.6Z M15,798.4 H21.6 V804.4 L15,803.5Z"/></g>
<rect x="818.5" y="783" width="407" height="27" fill="#121212"/><rect x="297" y="783" width="1" height="27" fill="#111"/><rect x="700" y="783.4" width="36" height="1" fill="#b0b0b0" opacity=".5"/>
</svg>
<div class="tx" style="left:124.4px;top:11.3px;font-size:9.3px;font-weight:normal;color:#1c1c1c;transform:scaleX(0.916)">Datei</div>
<div class="tx" style="left:157.0px;top:11.3px;font-size:9.3px;font-weight:normal;color:#1c1c1c;transform:scaleX(0.927)">Bearbeiten</div>
<div class="tx" style="left:211.0px;top:11.3px;font-size:9.3px;font-weight:normal;color:#1c1c1c;transform:scaleX(0.928)">Ansicht</div>
<div class="tx" style="left:252.0px;top:11.3px;font-size:9.3px;font-weight:normal;color:#1c1c1c;transform:scaleX(0.908)">Rohr</div>
<div class="tx" style="left:282.7px;top:11.3px;font-size:9.3px;font-weight:normal;color:#1c1c1c;transform:scaleX(0.954)">Einfügen</div>
<div class="tx" style="left:330.0px;top:11.3px;font-size:9.3px;font-weight:normal;color:#1c1c1c;transform:scaleX(0.835)">Extras</div>
<div class="tx" style="left:364.7px;top:11.3px;font-size:9.3px;font-weight:normal;color:#1c1c1c;transform:scaleX(0.907)">Fenster</div>
<div class="tx" style="left:405.3px;top:11.3px;font-size:9.3px;font-weight:normal;color:#1c1c1c;transform:scaleX(0.967)">Hilfe</div>
<div class="tx" style="left:604.2px;top:11.4px;font-size:9.2px;font-weight:normal;color:#1c1c1c;transform:scaleX(0.817)">ST15_50x30.SLDPRT *</div>
<div class="tx" style="left:35.0px;top:8.8px;font-size:11.6px;font-weight:bold;color:#262626;transform:scaleX(0.899)">Tube <span style="color:#5a5a5a">Design</span></div>
<div class="tx" style="left:12.0px;top:5.6px;font-size:5.6px;font-weight:bold;color:#0a0f50;transform:scaleX(0.772)">TRUMPF</div>
<div class="tx" style="left:-4.2px;top:770.4px;font-size:9.4px;font-weight:normal;color:#1c1c1c;transform:scaleX(0.981)">Tube Design</div>
<div class="tx" style="left:1168.2px;top:770.4px;font-size:9.4px;font-weight:normal;color:#1c1c1c;transform:scaleX(0.938)">Bearbeiten Teil</div>
<div class="tx" style="left:1345.4px;top:770.4px;font-size:9.4px;font-weight:normal;color:#1c1c1c;transform:scaleX(1.024)">mm</div>
<div class="tx" style="left:109.4px;top:756.6px;font-size:10.2px;font-weight:bold;color:#14141c;letter-spacing:.2px;transform:scaleX(0.947)">*Isometrisch</div>
</div>
</body>
</html>
